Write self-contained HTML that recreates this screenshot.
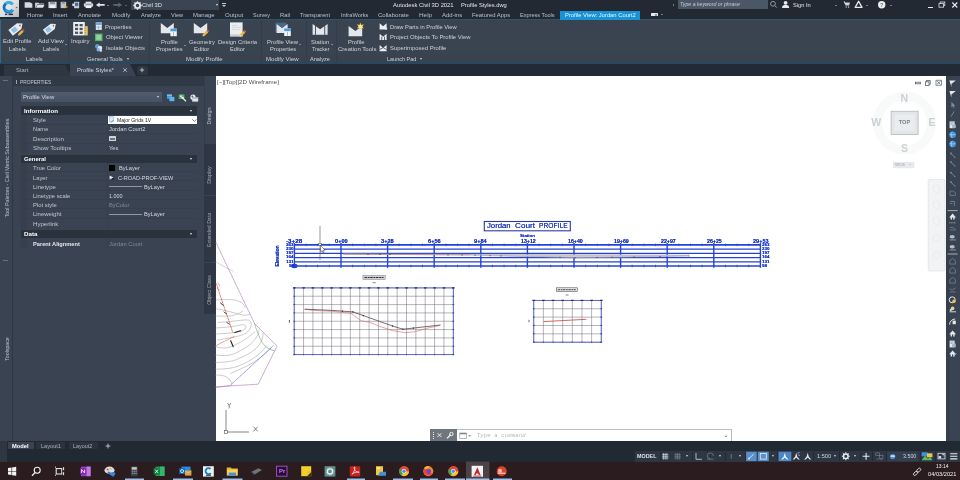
<!DOCTYPE html>
<html><head><meta charset="utf-8">
<style>
*{margin:0;padding:0;box-sizing:border-box}
html,body{width:960px;height:480px;overflow:hidden;background:#3b4453;font-family:"Liberation Sans",sans-serif;}
.a{position:absolute}
.t{position:absolute;white-space:nowrap;color:#c3cad2;font-size:6px;line-height:8px}
svg{overflow:visible}
#w{position:absolute;left:0;top:0;width:960px;height:480px;filter:blur(0.55px)}
</style></head><body><div id="w">
<div class="a" style="left:0px;top:0px;width:960px;height:19px;background:#222933;"></div>
<div class="a" style="left:0px;top:19px;width:960px;height:44px;background:#3a4451;"></div>
<div class="a" style="left:0px;top:19px;width:960px;height:1px;background:#2f5368;"></div>
<div class="a" style="left:0px;top:54px;width:960px;height:8px;background:#394350;"></div>
<div class="a" style="left:0px;top:62px;width:960px;height:1.6px;background:#28485f;"></div>
<div class="a" style="left:0px;top:64px;width:960px;height:12px;background:#222a35;"></div>
<div class="a" style="left:0px;top:76px;width:216px;height:365px;background:#3b4453;"></div>
<div class="a" style="left:216px;top:76px;width:729.5px;height:365px;background:#ffffff;"></div>
<div class="a" style="left:945.5px;top:76px;width:14.5px;height:365px;background:#3a4351;"></div>
<div class="a" style="left:945.5px;top:76px;width:4px;height:365px;background:#363f4c;"></div>
<div class="a" style="left:0px;top:441px;width:960px;height:22px;background:#222a35;"></div>
<div class="a" style="left:0px;top:462px;width:960px;height:18px;background:#2a1d20;"></div>
<div class="a" style="left:0;top:0;width:18.8px;height:17px;background:linear-gradient(135deg,#efeee6 0%,#dcdfe2 50%,#b4b9be 100%)"></div>
<svg class="a" style="left:0px;top:0px" width="19" height="17" viewBox="0 0 19 17"><path d="M13.6 3.4A6.200 6.200 0 1 0 14 10.800L11.400 9.200A3.200 3.200 0 1 1 11.200 5.200Z" fill="#1a6cb8"/><path d="M13.600 3.400A6.200 6.200 0 0 0 4.400 2.600L6.600 5A3.200 3.200 0 0 1 11.200 5.200Z" fill="#3db0e8"/><path d="M4.600 10.600A6.200 6.200 0 0 0 14 10.800L11.400 9.200A3.200 3.200 0 0 1 6.600 9Z" fill="#2a9ad8"/><circle cx="8.800" cy="6.600" r="2.600" fill="#d8eef6" opacity=".7"/><rect x="5" y="13.600" width="2.200" height="1.500" fill="#2a3a8a"/><rect x="8.600" y="13.600" width="4.400" height="1.500" fill="#2a2f38"/><path d="M15.600 7 l2 0 l-1 1.300z" fill="#555"/></svg>
<svg class="a" style="left:22.5px;top:1px" width="11" height="7.6" viewBox="0 0 10 9" preserveAspectRatio="none"><path d="M1.5 1.5h5l2 1.8v4.7h-7z" fill="#d5dae0"/></svg>
<svg class="a" style="left:34.2px;top:1px" width="11" height="7.6" viewBox="0 0 10 9" preserveAspectRatio="none"><path d="M1 2h3l.8.9H9v1H3L1.6 8H1z" fill="#cfd5db"/><path d="M3.2 4.4H9.6L8.2 8H1.8z" fill="#dfe3e7"/></svg>
<svg class="a" style="left:46.5px;top:1px" width="11" height="7.6" viewBox="0 0 10 9" preserveAspectRatio="none"><rect x="1.3" y="1" width="7.4" height="7.4" fill="#cfd4da"/><rect x="2.8" y="1" width="4.4" height="2.6" fill="#8d96a1"/><rect x="2.6" y="5" width="4.8" height="3.4" fill="#eef0f2"/></svg>
<svg class="a" style="left:58.5px;top:1px" width="11" height="7.6" viewBox="0 0 10 9" preserveAspectRatio="none"><rect x="1.5" y="1" width="5" height="7.4" fill="#bfc5cc"/><rect x="2.6" y="1" width="2.8" height="2.4" fill="#8d96a1"/><path d="M5 5.5l3.6 1.6L5 8.6z" fill="#e8b730"/></svg>
<svg class="a" style="left:71.1px;top:1px" width="11" height="7.6" viewBox="0 0 10 9" preserveAspectRatio="none"><rect x="2.8" y="0.8" width="4.6" height="7.8" rx=".6" fill="#c9cfd6"/><rect x="3.6" y="2" width="3" height="4" fill="#4a6d9a"/><rect x="1.2" y="3" width="2" height="3" fill="#dfe3e7"/></svg>
<svg class="a" style="left:82.5px;top:1px" width="11" height="7.6" viewBox="0 0 10 9" preserveAspectRatio="none"><rect x="2.4" y="0.8" width="5.2" height="2.4" fill="#e4e7ea"/><rect x="0.8" y="2.8" width="8.4" height="4" rx=".8" fill="#cdd2d8"/><rect x="2.4" y="5.4" width="5.2" height="3" fill="#f2f3f4"/><rect x="2.4" y="4" width="5.2" height=".9" fill="#7a8591"/></svg>
<svg class="a" style="left:94.5px;top:1px" width="11" height="7.6" viewBox="0 0 10 9" preserveAspectRatio="none"><path d="M0.8 4.6L4.2 1.8v1.7h4.6v2.2H4.2v1.7z" fill="#e4e7ea"/></svg>
<div class="a" style="left:107px;top:5px;width:0;height:0;border-left:1.5px solid transparent;border-right:1.5px solid transparent;border-top:1.8px solid #c3cad2"></div>
<svg class="a" style="left:111.5px;top:1px" width="11" height="7.6" viewBox="0 0 10 9" preserveAspectRatio="none"><path d="M9.2 4.6L5.8 1.8v1.7H1.2v2.2h4.6v1.7z" fill="#5d6774"/></svg>
<div class="a" style="left:125px;top:5px;width:0;height:0;border-left:1.5px solid transparent;border-right:1.5px solid transparent;border-top:1.8px solid #8c96a2"></div>
<div class="a" style="left:131px;top:0px;width:88px;height:10px;background:#3a4452;"></div>
<svg class="a" style="left:133px;top:0.5px" width="9" height="9" viewBox="0 0 9 9"><circle cx="4.5" cy="4.5" r="2.6" fill="none" stroke="#e8ebee" stroke-width="1.7"/><g stroke="#e8ebee" stroke-width="1.3"><path d="M4.5 0.3v1.6M4.5 7.1v1.6M0.3 4.5h1.6M7.1 4.5h1.6M1.5 1.5l1.1 1.1M6.4 6.4l1.1 1.1M1.5 7.5l1.1-1.1M6.4 2.6l1.1-1.1"/></g></svg>
<div class="t" style="left:141.70px;top:1.00px;font-size:5.70px;line-height:8px;color:#dfe3e8;transform-origin:0 50%;transform:scaleX(1.019);letter-spacing:0.000px;">Civil 3D</div>
<div class="a" style="left:215.5px;top:4px;width:0;height:0;border-left:1.8px solid transparent;border-right:1.8px solid transparent;border-top:2.2px solid #dfe3e8"></div>
<div class="a" style="left:222px;top:3px;width:4px;height:1px;background:#c3cad2"></div>
<div class="a" style="left:222px;top:5px;width:0;height:0;border-left:2px solid transparent;border-right:2px solid transparent;border-top:2.2px solid #c3cad2"></div>
<div class="t" style="left:393.00px;top:1.00px;font-size:5.70px;line-height:8px;color:#e3e6ea;transform-origin:0 50%;transform:scaleX(1.025);letter-spacing:0.000px;">Autodesk Civil 3D 2021</div>
<div class="t" style="left:460.80px;top:1.00px;font-size:5.70px;line-height:8px;color:#e3e6ea;transform-origin:0 50%;transform:scaleX(1.013);letter-spacing:0.000px;">Profile Styles.dwg</div>
<div class="a" style="left:673px;top:4px;width:0;height:0;border-top:1.3px solid transparent;border-bottom:1.3px solid transparent;border-left:1.8px solid #c3cad2"></div>
<div class="a" style="left:678px;top:0px;width:90px;height:9px;background:#4b5666;"></div>
<div class="t" style="left:680.30px;top:1.00px;font-size:5.32px;line-height:7.6px;color:#c6ccd3;transform-origin:0 50%;transform:scaleX(0.980);letter-spacing:0.000px;font-style:italic;">Type a keyword or phrase</div>
<svg class="a" style="left:769px;top:0px" width="10" height="9" viewBox="0 0 10 9"><circle cx="4" cy="3.8" r="2.4" fill="none" stroke="#9aa3ad" stroke-width=".9"/><path d="M5.8 5.6l2 2" stroke="#9aa3ad" stroke-width="1"/></svg>
<svg class="a" style="left:781px;top:0px" width="10" height="9" viewBox="0 0 10 9"><circle cx="4.6" cy="2.8" r="1.9" fill="#e8ebee"/><path d="M1 8c0-2.4 1.4-3.2 3.6-3.2S8.2 5.600 8.200 8z" fill="#e8ebee"/></svg>
<div class="t" style="left:793.00px;top:1.00px;font-size:5.70px;line-height:8px;color:#dfe3e8;transform-origin:0 50%;transform:scaleX(1.003);letter-spacing:0.000px;">Sign In</div>
<div class="a" style="left:835px;top:4.5px;width:0;height:0;border-left:1.3px solid transparent;border-right:1.3px solid transparent;border-top:1.6px solid #c3cad2"></div>
<svg class="a" style="left:842px;top:0px" width="10" height="9" viewBox="0 0 10 9"><path d="M1.5 1.6h1.3l.5 1h4.6l-.8 3H3.600z" fill="#cfd5db"/><circle cx="4.200" cy="7" r=".7" fill="#cfd5db"/><circle cx="6.600" cy="7" r=".7" fill="#cfd5db"/></svg>
<svg class="a" style="left:854px;top:0px" width="10" height="9" viewBox="0 0 10 9"><path d="M4.600 1.200L8 7.400H1.200z" fill="none" stroke="#e8ebee" stroke-width="1.300" stroke-linejoin="round"/></svg>
<div class="a" style="left:865.5px;top:4.5px;width:0;height:0;border-left:1.3px solid transparent;border-right:1.3px solid transparent;border-top:1.6px solid #c3cad2"></div>
<svg class="a" style="left:877px;top:0px" width="10" height="10" viewBox="0 0 10 10"><circle cx="4.700" cy="4.800" r="3.700" fill="#eceef0"/><text x="4.700" y="6.800" font-size="5.500" text-anchor="middle" fill="#6a7480" font-family="Liberation Sans" font-weight="bold">?</text></svg>
<div class="a" style="left:890px;top:4.5px;width:0;height:0;border-left:1.3px solid transparent;border-right:1.3px solid transparent;border-top:1.6px solid #c3cad2"></div>
<div class="a" style="left:928px;top:6.5px;width:4.5px;height:1.2px;background:#e8ebee;"></div>
<svg class="a" style="left:938px;top:1px" width="9" height="8" viewBox="0 0 9 8"><rect x="2.200" y="1" width="4.600" height="3.600" fill="none" stroke="#dfe3e8" stroke-width=".8"/><rect x="1" y="2.600" width="4.600" height="3.600" fill="#222933" stroke="#dfe3e8" stroke-width=".8"/></svg>
<svg class="a" style="left:951px;top:1px" width="8" height="8" viewBox="0 0 8 8"><path d="M1.300 1.500l5 5M6.300 1.500l-5 5" stroke="#e8ebee" stroke-width="1.100"/></svg>
<div class="t" style="left:26.90px;top:11.30px;font-size:5.70px;line-height:8px;color:#b9c1ca;transform-origin:0 50%;transform:scaleX(1.066);letter-spacing:0.000px;">Home</div>
<div class="t" style="left:53.10px;top:11.30px;font-size:5.70px;line-height:8px;color:#b9c1ca;transform-origin:0 50%;transform:scaleX(1.010);letter-spacing:0.000px;">Insert</div>
<div class="t" style="left:77.50px;top:11.30px;font-size:5.70px;line-height:8px;color:#b9c1ca;transform-origin:0 50%;transform:scaleX(1.012);letter-spacing:0.000px;">Annotate</div>
<div class="t" style="left:112.00px;top:11.30px;font-size:5.70px;line-height:8px;color:#b9c1ca;transform-origin:0 50%;transform:scaleX(1.090);letter-spacing:0.000px;">Modify</div>
<div class="t" style="left:140.80px;top:11.30px;font-size:5.70px;line-height:8px;color:#b9c1ca;transform-origin:0 50%;transform:scaleX(0.986);letter-spacing:0.000px;">Analyze</div>
<div class="t" style="left:170.80px;top:11.30px;font-size:5.70px;line-height:8px;color:#b9c1ca;transform-origin:0 50%;transform:scaleX(0.996);letter-spacing:0.000px;">View</div>
<div class="t" style="left:193.30px;top:11.30px;font-size:5.70px;line-height:8px;color:#b9c1ca;transform-origin:0 50%;transform:scaleX(1.054);letter-spacing:0.000px;">Manage</div>
<div class="t" style="left:224.70px;top:11.30px;font-size:5.70px;line-height:8px;color:#b9c1ca;transform-origin:0 50%;transform:scaleX(1.070);letter-spacing:0.000px;">Output</div>
<div class="t" style="left:253.00px;top:11.30px;font-size:5.70px;line-height:8px;color:#b9c1ca;transform-origin:0 50%;transform:scaleX(0.958);letter-spacing:0.000px;">Survey</div>
<div class="t" style="left:280.00px;top:11.30px;font-size:5.70px;line-height:8px;color:#b9c1ca;transform-origin:0 50%;transform:scaleX(1.018);letter-spacing:0.000px;">Rail</div>
<div class="t" style="left:300.00px;top:11.30px;font-size:5.70px;line-height:8px;color:#b9c1ca;transform-origin:0 50%;transform:scaleX(0.983);letter-spacing:0.000px;">Transparent</div>
<div class="t" style="left:340.80px;top:11.30px;font-size:5.70px;line-height:8px;color:#b9c1ca;transform-origin:0 50%;transform:scaleX(1.002);letter-spacing:0.000px;">InfraWorks</div>
<div class="t" style="left:378.00px;top:11.30px;font-size:5.70px;line-height:8px;color:#b9c1ca;transform-origin:0 50%;transform:scaleX(1.057);letter-spacing:0.000px;">Collaborate</div>
<div class="t" style="left:418.50px;top:11.30px;font-size:5.70px;line-height:8px;color:#b9c1ca;transform-origin:0 50%;transform:scaleX(1.126);letter-spacing:0.000px;">Help</div>
<div class="t" style="left:441.70px;top:11.30px;font-size:5.70px;line-height:8px;color:#b9c1ca;transform-origin:0 50%;transform:scaleX(1.050);letter-spacing:0.000px;">Add-ins</div>
<div class="t" style="left:471.70px;top:11.30px;font-size:5.70px;line-height:8px;color:#b9c1ca;transform-origin:0 50%;transform:scaleX(1.033);letter-spacing:0.000px;">Featured Apps</div>
<div class="t" style="left:520.00px;top:11.30px;font-size:5.70px;line-height:8px;color:#b9c1ca;transform-origin:0 50%;transform:scaleX(0.981);letter-spacing:0.000px;">Express Tools</div>
<div class="a" style="left:560px;top:11px;width:80px;height:9px;background:#1792d4;"></div>
<div class="t" style="left:565.00px;top:11.30px;font-size:5.70px;line-height:8px;color:#eaf4fb;transform-origin:0 50%;transform:scaleX(1.022);letter-spacing:0.000px;">Profile View: Jordan Court2</div>
<div class="a" style="left:651px;top:13.3px;width:7px;height:3.2px;background:#e8ebee;border-radius:.6px"></div>
<div class="a" style="left:655px;top:13.8px;width:2.4px;height:2.2px;background:#8d96a1;"></div>
<div class="a" style="left:661px;top:14.3px;width:0;height:0;border-left:1.4px solid transparent;border-right:1.4px solid transparent;border-top:1.7px solid #c3cad2"></div>
<div class="a" style="left:0px;top:20px;width:1px;height:43px;background:#34678a;"></div>
<div class="a" style="left:67.5px;top:21px;width:1px;height:41px;background:#333c49;"></div>
<div class="a" style="left:149.4px;top:21px;width:1px;height:41px;background:#333c49;"></div>
<div class="a" style="left:261.2px;top:21px;width:1px;height:41px;background:#333c49;"></div>
<div class="a" style="left:305.6px;top:21px;width:1px;height:41px;background:#333c49;"></div>
<div class="a" style="left:335.6px;top:21px;width:1px;height:41px;background:#333c49;"></div>
<svg class="a" style="left:0px;top:19px" width="68" height="44" viewBox="0 0 68 44"><g transform="translate(16.5,9.2) rotate(-38) scale(1.0)"><path d="M-7.5 -3.6H3.4L7.6 0L3.4 3.6H-7.5Z" fill="#e9ecef"/><rect x="-5.4" y="-2.3" width="5.4" height="4.6" fill="#8fc0ea"/><circle cx="4.4" cy="0" r=".9" fill="#6b7682"/></g><g transform="translate(18.2,16.4) rotate(-45) scale(0.95)"><path d="M0 0l1.6-1.2v2.400z" fill="#f3e6c8"/><rect x="1.6" y="-1.2" width="5.2" height="2.4" fill="#e9b93a"/><rect x="6.8" y="-1.2" width="1.6" height="2.4" fill="#d2553f"/></g></svg>
<div class="t" style="left:2.75px;top:37.30px;font-size:5.70px;line-height:8px;color:#cdd3da;transform-origin:0 50%;transform:scaleX(1.034);letter-spacing:0.000px;">Edit Profile</div>
<div class="t" style="left:8.75px;top:44.70px;font-size:5.70px;line-height:8px;color:#cdd3da;transform-origin:0 50%;transform:scaleX(1.003);letter-spacing:0.000px;">Labels</div>
<svg class="a" style="left:0px;top:19px" width="68" height="44" viewBox="0 0 68 44"><g transform="translate(50.3,9.2) rotate(-38) scale(0.92)"><path d="M-7.5 -3.6H3.4L7.6 0L3.4 3.6H-7.5Z" fill="#e9ecef"/><rect x="-5.4" y="-2.3" width="5.4" height="4.6" fill="#8fc0ea"/><circle cx="4.4" cy="0" r=".9" fill="#6b7682"/></g></svg>
<div class="t" style="left:38.10px;top:37.30px;font-size:5.70px;line-height:8px;color:#cdd3da;transform-origin:0 50%;transform:scaleX(1.070);letter-spacing:0.000px;">Add View</div>
<div class="t" style="left:42.50px;top:44.70px;font-size:5.70px;line-height:8px;color:#cdd3da;transform-origin:0 50%;transform:scaleX(0.968);letter-spacing:0.000px;">Labels</div>
<div class="a" style="left:65px;top:43.6px;width:0;height:0;border-left:1.3px solid transparent;border-right:1.3px solid transparent;border-top:1.6px solid #c3cad2"></div>
<div class="t" style="left:25.80px;top:55.00px;font-size:5.70px;line-height:8px;color:#cdd3da;transform-origin:0 50%;transform:scaleX(0.994);letter-spacing:0.000px;">Labels</div>
<svg class="a" style="left:0px;top:19px" width="150" height="44" viewBox="0 0 150 44"><rect x="73.2" y="3" width="11.6" height="13.4" fill="#eef0f2"/><rect x="75.0" y="5.0" width="3.1" height="2.3" fill="#4a5260"/><rect x="79.6" y="5.0" width="3.1" height="2.3" fill="#4a5260"/><rect x="75.0" y="8.8" width="3.1" height="2.3" fill="#4a5260"/><rect x="79.6" y="8.8" width="3.1" height="2.3" fill="#4a5260"/><rect x="75.0" y="12.6" width="3.1" height="2.3" fill="#4a5260"/><rect x="79.6" y="12.6" width="3.1" height="2.3" fill="#4a5260"/><rect x="84.6" y="7.2" width="3.2" height="9.2" fill="#e2c467"/><path d="M84.600 9.5h1.600M84.600 11.500h1.600M84.600 13.500h1.600" stroke="#9c8334" stroke-width=".5"/></svg>
<div class="t" style="left:71.30px;top:37.10px;font-size:5.70px;line-height:8px;color:#cdd3da;transform-origin:0 50%;transform:scaleX(1.081);letter-spacing:0.000px;">Inquiry</div>
<svg class="a" style="left:0px;top:19px" width="150" height="44" viewBox="0 0 150 44"><rect x="95.8" y="3.400" width="6" height="7.500" fill="#e6eaee"/><rect x="95.8" y="3.400" width="6" height="2.600" fill="#6fa8dc"/><path d="M98.600 6.400v4.500M95.800 8.200h6" stroke="#7d8fa3" stroke-width=".5"/><rect x="95" y="14.600" width="7.500" height="7.500" fill="#58b36c"/><rect x="96.200" y="15.800" width="5.100" height="5.100" fill="#92d29f"/><circle cx="97.300" cy="27.400" r="2.300" fill="#5b9bd8"/><circle cx="100" cy="29" r="2.300" fill="#dfe6ee"/><circle cx="98.200" cy="30.800" r="1.700" fill="#7fb3e4"/><circle cx="100.800" cy="31.600" r="1.300" fill="#cfdbe8"/></svg>
<div class="t" style="left:105.30px;top:22.50px;font-size:5.70px;line-height:8px;color:#cdd3da;transform-origin:0 50%;transform:scaleX(1.024);letter-spacing:0.000px;">Properties</div>
<div class="t" style="left:105.60px;top:33.40px;font-size:5.70px;line-height:8px;color:#cdd3da;transform-origin:0 50%;transform:scaleX(1.043);letter-spacing:0.000px;">Object Viewer</div>
<div class="t" style="left:106.00px;top:44.30px;font-size:5.70px;line-height:8px;color:#cdd3da;transform-origin:0 50%;transform:scaleX(1.035);letter-spacing:0.000px;">Isolate Objects</div>
<div class="t" style="left:87.25px;top:55.00px;font-size:5.70px;line-height:8px;color:#cdd3da;transform-origin:0 50%;transform:scaleX(1.022);letter-spacing:0.000px;">General Tools</div>
<div class="a" style="left:126.8px;top:58px;width:0;height:0;border-left:1.9px solid transparent;border-right:1.900px solid transparent;border-top:2.200px solid #cdd3da"></div>
<svg class="a" style="left:0px;top:19px" width="480" height="44" viewBox="0 0 480 44"><path d="M160.8 4L167.3 8.896L173.8 4V14.2H160.8Z" fill="#e3e6ea"/><rect x="170.4" y="9.6" width="6.4" height="7.6" fill="#f2f4f6"/><rect x="170.4" y="9.6" width="6.4" height="2.7359999999999998" fill="#4c9bdc"/><rect x="173.28" y="13.02" width="0.7" height="3.8" fill="#8aa0b6"/></svg>
<div class="t" style="left:161.00px;top:37.75px;font-size:5.70px;line-height:8px;color:#cdd3da;transform-origin:0 50%;transform:scaleX(1.037);letter-spacing:0.000px;">Profile</div>
<div class="t" style="left:156.00px;top:44.60px;font-size:5.70px;line-height:8px;color:#cdd3da;transform-origin:0 50%;transform:scaleX(1.030);letter-spacing:0.000px;">Properties</div>
<div class="a" style="left:183.8px;top:44.6px;width:0;height:0;border-left:1.3px solid transparent;border-right:1.3px solid transparent;border-top:1.6px solid #c3cad2"></div>
<svg class="a" style="left:0px;top:19px" width="480" height="44" viewBox="0 0 480 44"><path d="M193.8 4L200.5 8.896L207.20000000000002 4V14.2H193.8Z" fill="#e3e6ea"/><g transform="translate(202.6,17.2) rotate(-45) scale(1.0)"><path d="M0 0l1.6-1.2v2.400z" fill="#f3e6c8"/><rect x="1.6" y="-1.2" width="5.2" height="2.4" fill="#e9b93a"/><rect x="6.8" y="-1.2" width="1.6" height="2.4" fill="#d2553f"/></g></svg>
<div class="t" style="left:188.75px;top:37.75px;font-size:5.70px;line-height:8px;color:#cdd3da;transform-origin:0 50%;transform:scaleX(1.039);letter-spacing:0.000px;">Geometry</div>
<div class="t" style="left:194.40px;top:44.60px;font-size:5.70px;line-height:8px;color:#cdd3da;transform-origin:0 50%;transform:scaleX(1.031);letter-spacing:0.000px;">Editor</div>
<svg class="a" style="left:0px;top:19px" width="480" height="44" viewBox="0 0 480 44"><rect x="230" y="3.400" width="12.600" height="14" fill="#ebedef"/><rect x="230" y="15.400" width="12.600" height="2" fill="#c9cdd2"/><path d="M232 6.400h6M232 8.400h8.600M232 10.400h8.600" stroke="#c2c7cd" stroke-width=".6"/><g transform="translate(239.6,17.6) rotate(-45) scale(1.0)"><path d="M0 0l1.6-1.2v2.400z" fill="#f3e6c8"/><rect x="1.6" y="-1.2" width="5.2" height="2.4" fill="#e9b93a"/><rect x="6.8" y="-1.2" width="1.6" height="2.4" fill="#d2553f"/></g></svg>
<div class="t" style="left:218.10px;top:37.75px;font-size:5.70px;line-height:8px;color:#cdd3da;transform-origin:0 50%;transform:scaleX(1.039);letter-spacing:0.000px;">Design Criteria</div>
<div class="t" style="left:230.00px;top:44.60px;font-size:5.70px;line-height:8px;color:#cdd3da;transform-origin:0 50%;transform:scaleX(1.007);letter-spacing:0.000px;">Editor</div>
<div class="t" style="left:186.00px;top:55.00px;font-size:5.70px;line-height:8px;color:#cdd3da;transform-origin:0 50%;transform:scaleX(1.064);letter-spacing:0.000px;">Modify Profile</div>
<svg class="a" style="left:0px;top:19px" width="480" height="44" viewBox="0 0 480 44"><rect x="275.400" y="3.600" width="11" height="10" fill="#4d86b8" opacity=".55"/><path d="M276.6 5L282.1 9.32L287.6 5V14H276.6Z" fill="#e3e6ea"/><rect x="284.2" y="9.4" width="6.6" height="7.6" fill="#f2f4f6"/><rect x="284.2" y="9.4" width="6.6" height="2.7359999999999998" fill="#4c9bdc"/><rect x="287.17" y="12.82" width="0.7" height="3.8" fill="#8aa0b6"/></svg>
<div class="t" style="left:266.90px;top:37.75px;font-size:5.70px;line-height:8px;color:#cdd3da;transform-origin:0 50%;transform:scaleX(1.040);letter-spacing:0.000px;">Profile View</div>
<div class="t" style="left:269.75px;top:44.60px;font-size:5.70px;line-height:8px;color:#cdd3da;transform-origin:0 50%;transform:scaleX(1.011);letter-spacing:0.000px;">Properties</div>
<div class="a" style="left:299.4px;top:44.4px;width:0;height:0;border-left:1.3px solid transparent;border-right:1.3px solid transparent;border-top:1.6px solid #c3cad2"></div>
<div class="t" style="left:266.25px;top:55.00px;font-size:5.70px;line-height:8px;color:#cdd3da;transform-origin:0 50%;transform:scaleX(1.069);letter-spacing:0.000px;">Modify View</div>
<svg class="a" style="left:0px;top:19px" width="480" height="44" viewBox="0 0 480 44"><path d="M312.6 5L320.1 10.184000000000001L327.6 5V15.8H312.6Z" fill="#e3e6ea"/><rect x="315" y="5" width=".9" height="10.800" fill="#3a4451"/><rect x="324.300" y="5" width=".9" height="10.800" fill="#3a4451"/></svg>
<div class="t" style="left:311.00px;top:37.75px;font-size:5.70px;line-height:8px;color:#cdd3da;transform-origin:0 50%;transform:scaleX(1.037);letter-spacing:0.000px;">Station</div>
<div class="t" style="left:311.50px;top:44.60px;font-size:5.70px;line-height:8px;color:#cdd3da;transform-origin:0 50%;transform:scaleX(0.916);letter-spacing:0.000px;">Tracker</div>
<div class="a" style="left:331px;top:43.8px;width:0;height:0;border-left:1.3px solid transparent;border-right:1.3px solid transparent;border-top:1.6px solid #c3cad2"></div>
<div class="t" style="left:310.00px;top:55.00px;font-size:5.70px;line-height:8px;color:#cdd3da;transform-origin:0 50%;transform:scaleX(0.986);letter-spacing:0.000px;">Analyze</div>
<svg class="a" style="left:0px;top:19px" width="480" height="44" viewBox="0 0 480 44"><path d="M348.6 7L355.40000000000003 11.896L362.20000000000005 7V17.2H348.6Z" fill="#e3e6ea"/><g transform="translate(360.400,7.400)"><path d="M0-3.700L1 -1.300L3.500-2.200L2 0L3.500 2.200L1 1.300L0 3.700L-1 1.300L-3.500 2.200L-2 0L-3.500-2.200L-1-1.300Z" fill="#f3d24b"/><circle r="1.500" fill="#fbeaa0"/></g></svg>
<div class="t" style="left:348.10px;top:37.75px;font-size:5.70px;line-height:8px;color:#cdd3da;transform-origin:0 50%;transform:scaleX(1.031);letter-spacing:0.000px;">Profile</div>
<div class="t" style="left:337.50px;top:44.60px;font-size:5.70px;line-height:8px;color:#cdd3da;transform-origin:0 50%;transform:scaleX(1.060);letter-spacing:0.000px;">Creation Tools</div>
<svg class="a" style="left:0px;top:19px" width="480" height="44" viewBox="0 0 480 44"><path d="M379.6 4.2L383.1 7.176L386.6 4.2V10.4H379.6Z" fill="#eceef1"/><path d="M379.6 14.8L383.1 17.776L386.6 14.8V21.0H379.6Z" fill="#eceef1"/><path d="M379.6 26L383.1 28.976L386.6 26V32.2H379.6Z" fill="#eceef1"/><circle cx="386" cy="9.600" r="1.200" fill="#eceef1"/><rect x="381.400" y="17.600" width=".8" height="3.400" fill="#3a4451"/><rect x="384.200" y="17.600" width=".8" height="3.400" fill="#3a4451"/><path d="M379.600 30.600l3.500-2 3.500 2" stroke="#3b4553" stroke-width=".8" fill="none"/></svg>
<div class="t" style="left:390.00px;top:22.50px;font-size:5.70px;line-height:8px;color:#cdd3da;transform-origin:0 50%;transform:scaleX(1.017);letter-spacing:0.000px;">Draw Parts in Profile View</div>
<div class="t" style="left:390.00px;top:33.40px;font-size:5.70px;line-height:8px;color:#cdd3da;transform-origin:0 50%;transform:scaleX(1.037);letter-spacing:0.000px;">Project Objects To Profile View</div>
<div class="t" style="left:390.00px;top:44.30px;font-size:5.70px;line-height:8px;color:#cdd3da;transform-origin:0 50%;transform:scaleX(1.037);letter-spacing:0.000px;">Superimposed Profile</div>
<div class="t" style="left:386.90px;top:55.00px;font-size:5.70px;line-height:8px;color:#cdd3da;transform-origin:0 50%;transform:scaleX(0.965);letter-spacing:0.000px;">Launch Pad</div>
<div class="a" style="left:420px;top:58px;width:0;height:0;border-left:1.9px solid transparent;border-right:1.900px solid transparent;border-top:2.200px solid #cdd3da"></div>
<div class="a" style="left:4px;top:64.6px;width:67px;height:11.4px;background:#2e3642;clip-path:polygon(0 0,61px 0,67px 11.4px,0 11.4px)"></div>
<div class="a" style="left:137px;top:65.6px;width:10.5px;height:9px;background:#2e3642;border-radius:2px"></div>
<div class="t" style="left:16.00px;top:66.00px;font-size:5.70px;line-height:8px;color:#aeb6c0;transform-origin:0 50%;transform:scaleX(1.022);letter-spacing:0.000px;">Start</div>
<div class="a" style="left:70px;top:64px;width:66px;height:12px;background:#3a4351;clip-path:polygon(0 0,60px 0,66px 12px,0 12px)"></div>
<div class="t" style="left:77.00px;top:66.00px;font-size:5.70px;line-height:8px;color:#d5dae0;transform-origin:0 50%;transform:scaleX(1.043);letter-spacing:0.000px;">Profile Styles*</div>
<svg class="a" style="left:121px;top:66px" width="8" height="8" viewBox="0 0 8 8"><path d="M2.200 2.200l3.600 3.600M5.800 2.200l-3.600 3.600" stroke="#c3cad2" stroke-width=".8"/></svg>
<svg class="a" style="left:138px;top:66px" width="8" height="8" viewBox="0 0 8 8"><path d="M4 1.800v4.400M1.800 4h4.400" stroke="#c3cad2" stroke-width=".9"/></svg>
<div class="a" style="left:0px;top:76px;width:12px;height:365px;background:#3a4352;"></div>
<div class="a" style="left:12px;top:76px;width:1px;height:365px;background:#2f3743;"></div>
<div class="a" style="left:3px;top:79.5px;width:5px;height:1px;background:#687280;"></div>
<div class="t" style="left:-143.2px;top:164px;width:300px;height:8px;line-height:8px;text-align:center;font-size:6px;color:#b9c1ca;transform:rotate(-90deg) scaleX(0.886);transform-origin:50% 50%">Tool Palettes - Civil Metric Subassemblies</div>
<div class="a" style="left:3px;top:260px;width:5px;height:1px;background:#687280;"></div>
<div class="t" style="left:-143.2px;top:345px;width:300px;height:8px;line-height:8px;text-align:center;font-size:6px;color:#b9c1ca;transform:rotate(-90deg) scaleX(0.870);transform-origin:50% 50%">Toolspace</div>
<div class="a" style="left:13px;top:76px;width:191px;height:365px;background:#3a4351;"></div>
<div class="a" style="left:13px;top:76px;width:191px;height:10px;background:#303946;"></div>
<div class="a" style="left:15.6px;top:79.5px;width:1px;height:4.5px;background:#9aa3ae;"></div>
<div class="t" style="left:20.00px;top:77.60px;font-size:5.70px;line-height:8px;color:#c6cdd5;transform-origin:0 50%;transform:scaleX(0.853);letter-spacing:0.000px;">PROPERTIES</div>
<div class="a" style="left:21.2px;top:92.2px;width:141px;height:10px;background:linear-gradient(#505c6e,#465162)"></div>
<div class="t" style="left:22.50px;top:93.30px;font-size:5.70px;line-height:8px;color:#d5dbe2;transform-origin:0 50%;transform:scaleX(1.042);letter-spacing:0.000px;">Profile View</div>
<div class="a" style="left:157px;top:96.4px;width:0;height:0;border-left:1.8px solid transparent;border-right:1.8px solid transparent;border-top:2.2px solid #d5dbe2"></div>
<svg class="a" style="left:166px;top:93px" width="34" height="10" viewBox="0 0 34 10"><rect x="1" y="1.600" width="5" height="4.200" fill="#3d9be0"/><rect x="3.400" y="3.800" width="5" height="4.400" fill="#61b3ee"/><rect x="1" y="1.600" width="5" height="1.200" fill="#8ccaf4"/><rect x="12.800" y="1.400" width="5.600" height="4.600" fill="#4fae66"/><rect x="13.800" y="2.400" width="2.400" height="1.800" fill="#bfe5c8"/><path d="M16 4.400l4 3.800" stroke="#eef1f3" stroke-width="1.300"/><path d="M15.400 3.800l2.800.4-2.200 2.200z" fill="#eef1f3"/><circle cx="27" cy="4.200" r="2.600" fill="#eef1f3"/><rect x="26.200" y="4.400" width="6" height="4.200" fill="#e1e5e9"/><rect x="26.200" y="4.400" width="6" height="1.200" fill="#9aa6b3"/><circle cx="26.400" cy="3.600" r="1" fill="#5b6673"/></svg>
<div class="a" style="left:21.2px;top:115px;width:6px;height:37.5px;background:#373f4c;"></div>
<div class="a" style="left:106.6px;top:115px;width:0.8px;height:37.5px;background:#363f4b;"></div>
<div class="a" style="left:27.2px;top:123.94999999999999px;width:170.3px;height:0.8px;background:#373f4c;"></div>
<div class="a" style="left:27.2px;top:133.29999999999998px;width:170.3px;height:0.8px;background:#373f4c;"></div>
<div class="a" style="left:27.2px;top:142.64999999999998px;width:170.3px;height:0.8px;background:#373f4c;"></div>
<div class="a" style="left:21.2px;top:162px;width:6px;height:66.5px;background:#373f4c;"></div>
<div class="a" style="left:106.6px;top:162px;width:0.8px;height:66.5px;background:#363f4b;"></div>
<div class="a" style="left:27.2px;top:170.95px;width:170.3px;height:0.8px;background:#373f4c;"></div>
<div class="a" style="left:27.2px;top:180.29999999999998px;width:170.3px;height:0.8px;background:#373f4c;"></div>
<div class="a" style="left:27.2px;top:189.64999999999998px;width:170.3px;height:0.8px;background:#373f4c;"></div>
<div class="a" style="left:27.2px;top:198.99999999999997px;width:170.3px;height:0.8px;background:#373f4c;"></div>
<div class="a" style="left:27.2px;top:208.34999999999997px;width:170.3px;height:0.8px;background:#373f4c;"></div>
<div class="a" style="left:27.2px;top:217.69999999999996px;width:170.3px;height:0.8px;background:#373f4c;"></div>
<div class="a" style="left:21.2px;top:238px;width:6px;height:10px;background:#373f4c;"></div>
<div class="a" style="left:106.6px;top:238px;width:0.8px;height:10px;background:#363f4b;"></div>
<div class="a" style="left:21.2px;top:106.4px;width:176.3px;height:8.4px;background:#2a323d;"></div>
<div class="t" style="left:24.00px;top:106.70px;font-size:5.70px;line-height:8px;color:#ffffff;transform-origin:0 50%;transform:scaleX(1.088);letter-spacing:0.000px;font-weight:bold;">Information</div>
<div class="a" style="left:190px;top:109.7px;width:0;height:0;border-left:1.9px solid transparent;border-right:1.9px solid transparent;border-top:2.3px solid #e3e7eb"></div>
<div class="t" style="left:33.10px;top:116.20px;font-size:5.70px;line-height:8px;color:#c0c7cf;transform-origin:0 50%;transform:scaleX(1.018);letter-spacing:0.000px;">Style</div>
<div class="a" style="left:108.1px;top:115.9px;width:89.2px;height:8.4px;background:#ffffff;"></div>
<svg class="a" style="left:108.5px;top:116.4px" width="6" height="7.4" viewBox="0 0 6 7.4"><rect x=".6" y=".4" width="3.800" height="5.200" fill="#dfe8f2" stroke="#7fa6cf" stroke-width=".5"/><path d="M2 6.600l2.600-2.600" stroke="#4c86c2" stroke-width=".9"/></svg>
<div class="t" style="left:116.90px;top:116.80px;font-size:5.51px;line-height:7.8px;color:#20252c;transform-origin:0 50%;transform:scaleX(0.935);letter-spacing:0.000px;">Major Grids 1V</div>
<svg class="a" style="left:190.5px;top:117.5px" width="7" height="5" viewBox="0 0 7 5"><path d="M1.300 1.300l2.100 2.100 2.100-2.100" fill="none" stroke="#555e69" stroke-width=".8"/></svg>
<div class="t" style="left:33.10px;top:125.30px;font-size:5.70px;line-height:8px;color:#c0c7cf;transform-origin:0 50%;transform:scaleX(1.013);letter-spacing:0.000px;">Name</div>
<div class="t" style="left:109.00px;top:125.30px;font-size:5.70px;line-height:8px;color:#d4dae0;transform-origin:0 50%;transform:scaleX(1.013);letter-spacing:0.000px;">Jordan Court2</div>
<div class="t" style="left:33.10px;top:134.60px;font-size:5.70px;line-height:8px;color:#c0c7cf;transform-origin:0 50%;transform:scaleX(1.084);letter-spacing:0.000px;">Description</div>
<div class="a" style="left:109.2px;top:136.4px;width:6.4px;height:4.6px;background:#cfd4da;border-radius:.6px"></div>
<div class="a" style="left:110.2px;top:137.6px;width:4.4px;height:0.7px;background:#6c7682;"></div>
<div class="a" style="left:110.2px;top:139px;width:4.4px;height:0.7px;background:#6c7682;"></div>
<div class="t" style="left:33.10px;top:144.00px;font-size:5.70px;line-height:8px;color:#c0c7cf;transform-origin:0 50%;transform:scaleX(1.095);letter-spacing:0.000px;">Show Tooltips</div>
<div class="t" style="left:109.00px;top:144.00px;font-size:5.70px;line-height:8px;color:#d4dae0;transform-origin:0 50%;transform:scaleX(1.022);letter-spacing:0.000px;">Yes</div>
<div class="a" style="left:21.2px;top:154.7px;width:176.3px;height:8.4px;background:#2a323d;"></div>
<div class="t" style="left:24.00px;top:155.00px;font-size:5.70px;line-height:8px;color:#ffffff;transform-origin:0 50%;transform:scaleX(1.036);letter-spacing:0.000px;font-weight:bold;">General</div>
<div class="a" style="left:190px;top:158.0px;width:0;height:0;border-left:1.9px solid transparent;border-right:1.9px solid transparent;border-top:2.3px solid #e3e7eb"></div>
<div class="t" style="left:33.10px;top:164.20px;font-size:5.70px;line-height:8px;color:#c0c7cf;transform-origin:0 50%;transform:scaleX(1.044);letter-spacing:0.000px;">True Color</div>
<div class="a" style="left:109.2px;top:165.4px;width:5.8px;height:5.8px;background:#000000;"></div>
<div class="t" style="left:119.00px;top:164.20px;font-size:5.70px;line-height:8px;color:#d4dae0;transform-origin:0 50%;transform:scaleX(0.995);letter-spacing:0.000px;">ByLayer</div>
<div class="t" style="left:33.10px;top:173.60px;font-size:5.70px;line-height:8px;color:#c0c7cf;transform-origin:0 50%;transform:scaleX(1.010);letter-spacing:0.000px;">Layer</div>
<svg class="a" style="left:108.8px;top:175.2px" width="6" height="5" viewBox="0 0 6 5"><path d="M.6.600l3.800 1.900L.600 4.400z" fill="#e8ebee"/><rect x="3" y="3" width="2.200" height="1.600" fill="#20262f"/></svg>
<div class="t" style="left:118.00px;top:173.60px;font-size:5.70px;line-height:8px;color:#d4dae0;transform-origin:0 50%;transform:scaleX(0.976);letter-spacing:0.000px;">C-ROAD-PROF-VIEW</div>
<div class="t" style="left:33.10px;top:182.60px;font-size:5.70px;line-height:8px;color:#c0c7cf;transform-origin:0 50%;transform:scaleX(1.063);letter-spacing:0.000px;">Linetype</div>
<div class="a" style="left:109.2px;top:186.4px;width:32.5px;height:0.6px;background:#8f98a3;"></div>
<div class="t" style="left:143.60px;top:182.60px;font-size:5.70px;line-height:8px;color:#d4dae0;transform-origin:0 50%;transform:scaleX(0.995);letter-spacing:0.000px;">ByLayer</div>
<div class="t" style="left:33.10px;top:192.00px;font-size:5.70px;line-height:8px;color:#c0c7cf;transform-origin:0 50%;transform:scaleX(1.026);letter-spacing:0.000px;">Linetype scale</div>
<div class="t" style="left:109.00px;top:192.00px;font-size:5.70px;line-height:8px;color:#d4dae0;transform-origin:0 50%;transform:scaleX(0.954);letter-spacing:0.000px;">1.000</div>
<div class="t" style="left:33.10px;top:201.20px;font-size:5.70px;line-height:8px;color:#c0c7cf;transform-origin:0 50%;transform:scaleX(1.034);letter-spacing:0.000px;">Plot style</div>
<div class="t" style="left:109.00px;top:201.20px;font-size:5.70px;line-height:8px;color:#808a96;transform-origin:0 50%;transform:scaleX(1.006);letter-spacing:0.000px;">ByColor</div>
<div class="t" style="left:33.10px;top:210.40px;font-size:5.70px;line-height:8px;color:#c0c7cf;transform-origin:0 50%;transform:scaleX(1.042);letter-spacing:0.000px;">Lineweight</div>
<div class="a" style="left:109.2px;top:214.2px;width:32.5px;height:0.6px;background:#8f98a3;"></div>
<div class="t" style="left:143.60px;top:210.40px;font-size:5.70px;line-height:8px;color:#d4dae0;transform-origin:0 50%;transform:scaleX(0.995);letter-spacing:0.000px;">ByLayer</div>
<div class="t" style="left:33.10px;top:219.70px;font-size:5.70px;line-height:8px;color:#c0c7cf;transform-origin:0 50%;transform:scaleX(1.069);letter-spacing:0.000px;">Hyperlink</div>
<div class="a" style="left:21.2px;top:230px;width:176.3px;height:8.4px;background:#2a323d;"></div>
<div class="t" style="left:24.00px;top:230.30px;font-size:5.70px;line-height:8px;color:#ffffff;transform-origin:0 50%;transform:scaleX(1.093);letter-spacing:0.000px;font-weight:bold;">Data</div>
<div class="a" style="left:190px;top:233.3px;width:0;height:0;border-left:1.9px solid transparent;border-right:1.9px solid transparent;border-top:2.3px solid #e3e7eb"></div>
<div class="t" style="left:33.10px;top:239.50px;font-size:5.70px;line-height:8px;color:#e4e7eb;transform-origin:0 50%;transform:scaleX(0.998);letter-spacing:0.000px;font-weight:bold;">Parent Alignment</div>
<div class="t" style="left:109.00px;top:239.50px;font-size:5.70px;line-height:8px;color:#808a96;transform-origin:0 50%;transform:scaleX(1.017);letter-spacing:0.000px;">Jordan Court</div>
<div class="a" style="left:203.8px;top:76px;width:12px;height:365px;background:#3a4351;"></div>
<div class="a" style="left:203.8px;top:143.5px;width:12px;height:170.5px;background:#2f3744;"></div>
<div class="a" style="left:203.8px;top:76px;width:0.8px;height:67.5px;background:#333c48;"></div>
<div class="a" style="left:203.8px;top:195px;width:12px;height:0.8px;background:#3a4351;"></div>
<div class="a" style="left:203.8px;top:262px;width:12px;height:0.8px;background:#3a4351;"></div>
<div class="t" style="left:59.19999999999999px;top:112px;width:300px;height:8px;line-height:8px;text-align:center;font-size:6px;color:#b9c1ca;transform:rotate(-90deg) scaleX(0.900);transform-origin:50% 50%">Design</div>
<div class="t" style="left:59.19999999999999px;top:170.8px;width:300px;height:8px;line-height:8px;text-align:center;font-size:6px;color:#9fa8b3;transform:rotate(-90deg) scaleX(0.890);transform-origin:50% 50%">Display</div>
<div class="t" style="left:59.19999999999999px;top:225.8px;width:300px;height:8px;line-height:8px;text-align:center;font-size:6px;color:#9fa8b3;transform:rotate(-90deg) scaleX(0.857);transform-origin:50% 50%">Extended Data</div>
<div class="t" style="left:59.19999999999999px;top:285.8px;width:300px;height:8px;line-height:8px;text-align:center;font-size:6px;color:#9fa8b3;transform:rotate(-90deg) scaleX(0.867);transform-origin:50% 50%">Object Class</div>
<div class="t" style="left:217.00px;top:78.00px;font-size:5.70px;line-height:8px;color:#4a4f55;transform-origin:0 50%;transform:scaleX(1.084);letter-spacing:0.000px;">[&#8722;][Top][2D Wireframe]</div>
<svg class="a" style="left:0px;top:0px" width="960" height="480" viewBox="0 0 960 480"><g fill="none" stroke-linecap="round" stroke-linejoin="round"><path d="M215.900 242.400L254.500 323.500L277 346.100L258.200 384.200L216 386.800" stroke="#a878b8" stroke-width=".6"/><path d="M216 262L223 266L233 271" stroke="#aaaaaa" stroke-width=".5"/><path d="M216.5 300Q231.5 298.75 237.1 300.6Q242.75 302.5 244.0 305.0L245.25 307.5" stroke="#9a9a9a" stroke-width=".5"/><path d="M216.5 308.75Q234 312.5 239.2 314.2Q244.5 316 247.2 315.0L250 314" stroke="#9a9a9a" stroke-width=".5"/><path d="M217.75 322.5Q234 321.25 240.0 320.4Q246 319.5 248.8 320.2Q251.5 321 251.2 324.5Q251 328 249.0 330.5Q247 333 243.0 334.6Q239 336.25 228.4 338.1L217.75 340" stroke="#9a9a9a" stroke-width=".5"/><path d="M216 328Q232 327 238.0 325.5Q244 324 245.5 325.5Q247 327 245.0 329.0Q243 331 237.5 332.0Q232 333 224.0 333.5L216 334" stroke="#9a9a9a" stroke-width=".5"/><path d="M215.7 346.7Q224 349.2 229.8 347.1Q235.7 345 241.5 341.6Q247.3 338.3 251.1 335.0L254.8 331.7" stroke="#9a9a9a" stroke-width=".5"/><path d="M215.7 355Q227.3 356.7 234.0 353.8Q240.7 350.8 246.5 347.1Q252.3 343.3 255.2 339.1Q258.2 335 258.6 332.5L259 330" stroke="#9a9a9a" stroke-width=".5"/><path d="M215.7 362.5Q229 362.5 236.5 359.6Q244 356.7 250.7 352.5Q257.3 348.3 259.8 344.1Q262.3 340 262.8 336.6L263.2 333.3" stroke="#9a9a9a" stroke-width=".5"/><path d="M215.7 369.2Q230.7 369.2 239.0 365.9Q247.3 362.5 254.0 357.9Q260.7 353.3 263.6 349.6L266.5 345.8" stroke="#9a9a9a" stroke-width=".5"/><path d="M215.7 375Q224 375 227.3 377.5Q230.7 380 231.1 382.1L231.5 384.2" stroke="#9a9a9a" stroke-width=".5"/><path d="M230.7 373.3Q249 365.8 256.5 360.4Q264 355 267.4 351.6L270.7 348.3" stroke="#9a9a9a" stroke-width=".5"/><path d="M216 316Q226 316.5 231.0 315.8Q236 315 239.5 313.0L243 311" stroke="#9a9a9a" stroke-width=".5"/><path d="M216.500 283.750L222 301L228 318L232.750 332.500" stroke="#d9473a" stroke-width=".7" stroke-dasharray="1.800 1.200"/><path d="M234 336.700L224 341.500L215.700 345.800" stroke="#d9473a" stroke-width=".6" stroke-dasharray="1.600 1.200"/><path d="M220.500 303l3 2.400M224 312l2.600 2M226.800 322.500l2.400 1.600" stroke="#333" stroke-width=".9"/><path d="M230.700 340.800L233.200 346.700M234.800 332.500L240.700 330.800" stroke="#222" stroke-width="1.100"/><path d="M254.5 323.5Q256.2 329 257.2 331.6Q258.2 334.1 260.3 338.8Q262.4 343.5 265.2 346.1Q268.1 348.7 271.2 349.8L274.4 350.8" stroke="#6aa574" stroke-width=".6"/><path d="M231.500 384.200L273.200 345.800" stroke="#4a5fd0" stroke-width=".6" stroke-dasharray="3 1 .8 1"/><path d="M216 387.500L231 385.500" stroke="#b06ac0" stroke-width=".6" stroke-dasharray="1.500 1"/><path d="M218 283l2 3M217 288l2 2" stroke="#d9473a" stroke-width=".5"/></g><g stroke="#2443d6" fill="none"><path d="M294.4 244.90H760.4" stroke-width="1.7"/><path d="M294.4 249.12H760.4" stroke-width="1.2"/><path d="M294.4 253.34H760.4" stroke-width="1.2"/><path d="M294.4 257.56H760.4" stroke-width="1.2"/><path d="M294.4 261.78H760.4" stroke-width="1.2"/><path d="M294.4 266.00H760.4" stroke-width="1.7"/><path d="M294.4 243.1V267.8" stroke-width="1.400"/><path d="M341.0 243.1V267.8" stroke-width="1.400"/><path d="M387.6 243.1V267.8" stroke-width="1.400"/><path d="M434.2 243.1V267.8" stroke-width="1.400"/><path d="M480.8 243.1V267.8" stroke-width="1.400"/><path d="M527.4 243.1V267.8" stroke-width="1.400"/><path d="M574.0 243.1V267.8" stroke-width="1.400"/><path d="M620.6 243.1V267.8" stroke-width="1.400"/><path d="M667.2 243.1V267.8" stroke-width="1.400"/><path d="M713.8 243.1V267.8" stroke-width="1.400"/><path d="M760.4 243.1V267.8" stroke-width="1.400"/><path d="M306.0 243.70000000000002V246.1M306.0 264.8V267.2" stroke-width=".9"/><path d="M317.7 243.70000000000002V246.1M317.7 264.8V267.2" stroke-width=".9"/><path d="M329.3 243.70000000000002V246.1M329.3 264.8V267.2" stroke-width=".9"/><path d="M352.6 243.70000000000002V246.1M352.6 264.8V267.2" stroke-width=".9"/><path d="M364.3 243.70000000000002V246.1M364.3 264.8V267.2" stroke-width=".9"/><path d="M375.9 243.70000000000002V246.1M375.9 264.8V267.2" stroke-width=".9"/><path d="M399.2 243.70000000000002V246.1M399.2 264.8V267.2" stroke-width=".9"/><path d="M410.9 243.70000000000002V246.1M410.9 264.8V267.2" stroke-width=".9"/><path d="M422.5 243.70000000000002V246.1M422.5 264.8V267.2" stroke-width=".9"/><path d="M445.9 243.70000000000002V246.1M445.9 264.8V267.2" stroke-width=".9"/><path d="M457.5 243.70000000000002V246.1M457.5 264.8V267.2" stroke-width=".9"/><path d="M469.1 243.70000000000002V246.1M469.1 264.8V267.2" stroke-width=".9"/><path d="M492.4 243.70000000000002V246.1M492.4 264.8V267.2" stroke-width=".9"/><path d="M504.1 243.70000000000002V246.1M504.1 264.8V267.2" stroke-width=".9"/><path d="M515.8 243.70000000000002V246.1M515.8 264.8V267.2" stroke-width=".9"/><path d="M539.0 243.70000000000002V246.1M539.0 264.8V267.2" stroke-width=".9"/><path d="M550.7 243.70000000000002V246.1M550.7 264.8V267.2" stroke-width=".9"/><path d="M562.3 243.70000000000002V246.1M562.3 264.8V267.2" stroke-width=".9"/><path d="M585.6 243.70000000000002V246.1M585.6 264.8V267.2" stroke-width=".9"/><path d="M597.3 243.70000000000002V246.1M597.3 264.8V267.2" stroke-width=".9"/><path d="M609.0 243.70000000000002V246.1M609.0 264.8V267.2" stroke-width=".9"/><path d="M632.2 243.70000000000002V246.1M632.2 264.8V267.2" stroke-width=".9"/><path d="M643.9 243.70000000000002V246.1M643.9 264.8V267.2" stroke-width=".9"/><path d="M655.5 243.70000000000002V246.1M655.5 264.8V267.2" stroke-width=".9"/><path d="M678.8 243.70000000000002V246.1M678.8 264.8V267.2" stroke-width=".9"/><path d="M690.5 243.70000000000002V246.1M690.5 264.8V267.2" stroke-width=".9"/><path d="M702.1 243.70000000000002V246.1M702.1 264.8V267.2" stroke-width=".9"/><path d="M725.5 243.70000000000002V246.1M725.5 264.8V267.2" stroke-width=".9"/><path d="M737.1 243.70000000000002V246.1M737.1 264.8V267.2" stroke-width=".9"/><path d="M748.8 243.70000000000002V246.1M748.8 264.8V267.2" stroke-width=".9"/></g><ellipse cx="294.400" cy="266" rx="3.200" ry="2.200" fill="#2443d6"/><rect x="484.300" y="221.500" width="86" height="9.300" fill="#fff" stroke="#2a3c9c" stroke-width="1.100"/><path d="M343 253.800L689 255.100L689 256.100L620 257.300L575 257.700L520 256.500L470 255.100L400 254.500L343 254.300Z" fill="#c9c9d2"/><path d="M343 254.300L400 254.500L470 255.100L520 256.500L575 257.700L620 257.300L689 256.100" stroke="#8a7f86" stroke-width=".45" fill="none"/><path d="M343 253.800L689 255.100" stroke="#9a9098" stroke-width=".4" fill="none"/><path d="M343 254.100L470 254.900" stroke="#c98078" stroke-width=".5" fill="none"/><rect x="367.5" y="253.9" width="1" height="1" fill="#3a3540"/><rect x="379.5" y="253.9" width="1" height="1" fill="#3a3540"/><rect x="389.5" y="254.0" width="1" height="1" fill="#3a3540"/><rect x="447.5" y="254.4" width="1" height="1" fill="#3a3540"/><rect x="461.5" y="254.5" width="1" height="1" fill="#3a3540"/><rect x="474.5" y="254.7" width="1" height="1" fill="#3a3540"/><rect x="489.5" y="255.2" width="1" height="1" fill="#3a3540"/><rect x="500.5" y="255.5" width="1" height="1" fill="#3a3540"/><rect x="559.5" y="256.9" width="1" height="1" fill="#3a3540"/><rect x="574.5" y="257.1" width="1" height="1" fill="#3a3540"/><rect x="596.5" y="257.0" width="1" height="1" fill="#3a3540"/><rect x="611.5" y="256.8" width="1" height="1" fill="#3a3540"/><rect x="633.5" y="256.5" width="1" height="1" fill="#3a3540"/><rect x="659.5" y="256.1" width="1" height="1" fill="#3a3540"/><path d="M689 254.600V257.400" stroke="#777" stroke-width=".5"/><g fill="none"><path d="M294.20 287.9V354.6" stroke="#5a5a66" stroke-width=".45"/><path d="M303.56 287.9V354.6" stroke="#5a5a66" stroke-width=".45"/><path d="M312.92 287.9V354.6" stroke="#5a5a66" stroke-width=".45"/><path d="M322.28 287.9V354.6" stroke="#5a5a66" stroke-width=".45"/><path d="M331.64 287.9V354.6" stroke="#5a5a66" stroke-width=".45"/><path d="M340.99 287.9V354.6" stroke="#5a5a66" stroke-width=".45"/><path d="M350.35 287.9V354.6" stroke="#5a5a66" stroke-width=".45"/><path d="M359.71 287.9V354.6" stroke="#5a5a66" stroke-width=".45"/><path d="M369.07 287.9V354.6" stroke="#5a5a66" stroke-width=".45"/><path d="M378.43 287.9V354.6" stroke="#5a5a66" stroke-width=".45"/><path d="M387.79 287.9V354.6" stroke="#5a5a66" stroke-width=".45"/><path d="M397.15 287.9V354.6" stroke="#5a5a66" stroke-width=".45"/><path d="M406.51 287.9V354.6" stroke="#5a5a66" stroke-width=".45"/><path d="M415.86 287.9V354.6" stroke="#5a5a66" stroke-width=".45"/><path d="M425.22 287.9V354.6" stroke="#5a5a66" stroke-width=".45"/><path d="M434.58 287.9V354.6" stroke="#5a5a66" stroke-width=".45"/><path d="M443.94 287.9V354.6" stroke="#5a5a66" stroke-width=".45"/><path d="M453.30 287.9V354.6" stroke="#5a5a66" stroke-width=".45"/><path d="M294.2 287.90H453.3" stroke="#5a5a66" stroke-width=".45"/><path d="M294.2 296.24H453.3" stroke="#5a5a66" stroke-width=".45"/><path d="M294.2 304.57H453.3" stroke="#5a5a66" stroke-width=".45"/><path d="M294.2 312.91H453.3" stroke="#5a5a66" stroke-width=".45"/><path d="M294.2 321.25H453.3" stroke="#5a5a66" stroke-width=".45"/><path d="M294.2 329.59H453.3" stroke="#5a5a66" stroke-width=".45"/><path d="M294.2 337.93H453.3" stroke="#5a5a66" stroke-width=".45"/><path d="M294.2 346.26H453.3" stroke="#5a5a66" stroke-width=".45"/><path d="M294.2 354.60H453.3" stroke="#5a5a66" stroke-width=".45"/><rect x="294.2" y="287.9" width="159.10000000000002" height="66.70000000000005" stroke="#4a58d2" stroke-width=".8"/><path d="M292.90 287.9h2.600" stroke="#1a2478" stroke-width="1.200"/><path d="M294.20 353.8v1.600" stroke="#3c4bd0" stroke-width=".8"/><path d="M302.26 287.9h2.600" stroke="#1a2478" stroke-width="1.200"/><path d="M303.56 353.8v1.600" stroke="#3c4bd0" stroke-width=".8"/><path d="M311.62 287.9h2.600" stroke="#1a2478" stroke-width="1.200"/><path d="M312.92 353.8v1.600" stroke="#3c4bd0" stroke-width=".8"/><path d="M320.98 287.9h2.600" stroke="#1a2478" stroke-width="1.200"/><path d="M322.28 353.8v1.600" stroke="#3c4bd0" stroke-width=".8"/><path d="M330.34 287.9h2.600" stroke="#1a2478" stroke-width="1.200"/><path d="M331.64 353.8v1.600" stroke="#3c4bd0" stroke-width=".8"/><path d="M339.69 287.9h2.600" stroke="#1a2478" stroke-width="1.200"/><path d="M340.99 353.8v1.600" stroke="#3c4bd0" stroke-width=".8"/><path d="M349.05 287.9h2.600" stroke="#1a2478" stroke-width="1.200"/><path d="M350.35 353.8v1.600" stroke="#3c4bd0" stroke-width=".8"/><path d="M358.41 287.9h2.600" stroke="#1a2478" stroke-width="1.200"/><path d="M359.71 353.8v1.600" stroke="#3c4bd0" stroke-width=".8"/><path d="M367.77 287.9h2.600" stroke="#1a2478" stroke-width="1.200"/><path d="M369.07 353.8v1.600" stroke="#3c4bd0" stroke-width=".8"/><path d="M377.13 287.9h2.600" stroke="#1a2478" stroke-width="1.200"/><path d="M378.43 353.8v1.600" stroke="#3c4bd0" stroke-width=".8"/><path d="M386.49 287.9h2.600" stroke="#1a2478" stroke-width="1.200"/><path d="M387.79 353.8v1.600" stroke="#3c4bd0" stroke-width=".8"/><path d="M395.85 287.9h2.600" stroke="#1a2478" stroke-width="1.200"/><path d="M397.15 353.8v1.600" stroke="#3c4bd0" stroke-width=".8"/><path d="M405.21 287.9h2.600" stroke="#1a2478" stroke-width="1.200"/><path d="M406.51 353.8v1.600" stroke="#3c4bd0" stroke-width=".8"/><path d="M414.56 287.9h2.600" stroke="#1a2478" stroke-width="1.200"/><path d="M415.86 353.8v1.600" stroke="#3c4bd0" stroke-width=".8"/><path d="M423.92 287.9h2.600" stroke="#1a2478" stroke-width="1.200"/><path d="M425.22 353.8v1.600" stroke="#3c4bd0" stroke-width=".8"/><path d="M433.28 287.9h2.600" stroke="#1a2478" stroke-width="1.200"/><path d="M434.58 353.8v1.600" stroke="#3c4bd0" stroke-width=".8"/><path d="M442.64 287.9h2.600" stroke="#1a2478" stroke-width="1.200"/><path d="M443.94 353.8v1.600" stroke="#3c4bd0" stroke-width=".8"/><path d="M452.00 287.9h2.600" stroke="#1a2478" stroke-width="1.200"/><path d="M453.30 353.8v1.600" stroke="#3c4bd0" stroke-width=".8"/><path d="M293.3 287.90h1.800M452.40000000000003 287.90h1.800" stroke="#2a38b8" stroke-width=".9"/><path d="M293.3 296.24h1.800M452.40000000000003 296.24h1.800" stroke="#2a38b8" stroke-width=".9"/><path d="M293.3 304.57h1.800M452.40000000000003 304.57h1.800" stroke="#2a38b8" stroke-width=".9"/><path d="M293.3 312.91h1.800M452.40000000000003 312.91h1.800" stroke="#2a38b8" stroke-width=".9"/><path d="M293.3 321.25h1.800M452.40000000000003 321.25h1.800" stroke="#2a38b8" stroke-width=".9"/><path d="M293.3 329.59h1.800M452.40000000000003 329.59h1.800" stroke="#2a38b8" stroke-width=".9"/><path d="M293.3 337.93h1.800M452.40000000000003 337.93h1.800" stroke="#2a38b8" stroke-width=".9"/><path d="M293.3 346.26h1.800M452.40000000000003 346.26h1.800" stroke="#2a38b8" stroke-width=".9"/><path d="M293.3 354.60h1.800M452.40000000000003 354.60h1.800" stroke="#2a38b8" stroke-width=".9"/></g><rect x="362.900" y="275.400" width="22.300" height="4.200" fill="#cfcfd2" stroke="#666" stroke-width=".4"/><path d="M364.500 277.500h19" stroke="#333" stroke-width="1.100" stroke-dasharray="2.600 .7 1.800 .6"/><path d="M372.500 282.700h3.200" stroke="#555" stroke-width=".7"/><path d="M289.400 320v2.600" stroke="#444" stroke-width=".9"/><path d="M304.600 309.200L313.300 310.400L332.100 311.300L350.800 313.300L361.300 320.800L369.600 322.300L380 326.500L392.500 330.600L405 332.700L415.400 331.700L425.800 328.500L440.400 325.400" stroke="#d46a64" stroke-width=".6" fill="none"/><path d="M304.600 309.200L332.100 310.400L352.900 311.900L363.300 315.600L392.500 326L402.900 329.200L413.300 328.100L440.400 325" stroke="#4a2f33" stroke-width=".7" fill="none"/><rect x="341.9" y="310.59999999999997" width="1.200" height="1.200" fill="#222"/><rect x="352.29999999999995" y="311.29999999999995" width="1.200" height="1.200" fill="#222"/><rect x="362.7" y="315.0" width="1.200" height="1.200" fill="#222"/><rect x="391.9" y="325.4" width="1.200" height="1.200" fill="#222"/><rect x="402.29999999999995" y="328.59999999999997" width="1.200" height="1.200" fill="#222"/><rect x="412.7" y="327.5" width="1.200" height="1.200" fill="#222"/><g fill="none"><path d="M533.75 300.4V342.2" stroke="#5a5a66" stroke-width=".45"/><path d="M543.39 300.4V342.2" stroke="#5a5a66" stroke-width=".45"/><path d="M553.04 300.4V342.2" stroke="#5a5a66" stroke-width=".45"/><path d="M562.68 300.4V342.2" stroke="#5a5a66" stroke-width=".45"/><path d="M572.32 300.4V342.2" stroke="#5a5a66" stroke-width=".45"/><path d="M581.96 300.4V342.2" stroke="#5a5a66" stroke-width=".45"/><path d="M591.61 300.4V342.2" stroke="#5a5a66" stroke-width=".45"/><path d="M601.25 300.4V342.2" stroke="#5a5a66" stroke-width=".45"/><path d="M533.75 300.40H601.25" stroke="#5a5a66" stroke-width=".45"/><path d="M533.75 308.76H601.25" stroke="#5a5a66" stroke-width=".45"/><path d="M533.75 317.12H601.25" stroke="#5a5a66" stroke-width=".45"/><path d="M533.75 325.48H601.25" stroke="#5a5a66" stroke-width=".45"/><path d="M533.75 333.84H601.25" stroke="#5a5a66" stroke-width=".45"/><path d="M533.75 342.20H601.25" stroke="#5a5a66" stroke-width=".45"/><rect x="533.75" y="300.4" width="67.5" height="41.80000000000001" stroke="#4a58d2" stroke-width=".8"/><path d="M532.45 300.4h2.600" stroke="#1a2478" stroke-width="1.200"/><path d="M533.75 341.4v1.600" stroke="#3c4bd0" stroke-width=".8"/><path d="M542.09 300.4h2.600" stroke="#1a2478" stroke-width="1.200"/><path d="M543.39 341.4v1.600" stroke="#3c4bd0" stroke-width=".8"/><path d="M551.74 300.4h2.600" stroke="#1a2478" stroke-width="1.200"/><path d="M553.04 341.4v1.600" stroke="#3c4bd0" stroke-width=".8"/><path d="M561.38 300.4h2.600" stroke="#1a2478" stroke-width="1.200"/><path d="M562.68 341.4v1.600" stroke="#3c4bd0" stroke-width=".8"/><path d="M571.02 300.4h2.600" stroke="#1a2478" stroke-width="1.200"/><path d="M572.32 341.4v1.600" stroke="#3c4bd0" stroke-width=".8"/><path d="M580.66 300.4h2.600" stroke="#1a2478" stroke-width="1.200"/><path d="M581.96 341.4v1.600" stroke="#3c4bd0" stroke-width=".8"/><path d="M590.31 300.4h2.600" stroke="#1a2478" stroke-width="1.200"/><path d="M591.61 341.4v1.600" stroke="#3c4bd0" stroke-width=".8"/><path d="M599.95 300.4h2.600" stroke="#1a2478" stroke-width="1.200"/><path d="M601.25 341.4v1.600" stroke="#3c4bd0" stroke-width=".8"/><path d="M532.85 300.40h1.800M600.35 300.40h1.800" stroke="#2a38b8" stroke-width=".9"/><path d="M532.85 308.76h1.800M600.35 308.76h1.800" stroke="#2a38b8" stroke-width=".9"/><path d="M532.85 317.12h1.800M600.35 317.12h1.800" stroke="#2a38b8" stroke-width=".9"/><path d="M532.85 325.48h1.800M600.35 325.48h1.800" stroke="#2a38b8" stroke-width=".9"/><path d="M532.85 333.84h1.800M600.35 333.84h1.800" stroke="#2a38b8" stroke-width=".9"/><path d="M532.85 342.20h1.800M600.35 342.20h1.800" stroke="#2a38b8" stroke-width=".9"/></g><rect x="556.250" y="287.800" width="21" height="3.800" fill="#e4e4e6" stroke="#444" stroke-width=".5"/><path d="M557.800 289.700h18" stroke="#333" stroke-width=".9" stroke-dasharray="2.400 .7 1.600 .6"/><path d="M565.600 295h3" stroke="#555" stroke-width=".7"/><path d="M529 319.800v2.400" stroke="#444" stroke-width=".8"/><path d="M543.500 321.600L586.250 319.300" stroke="#c2453c" stroke-width=".8" fill="none"/><path d="M320 226V260" stroke="#555" stroke-width=".6"/><rect x="318.800" y="243.300" width="2.400" height="2.400" fill="#fff" stroke="#333" stroke-width=".5"/><path d="M320.600 245.400v6.600l1.500-1.400 1 2.200 1-.5-1-2.100h2z" fill="#fff" stroke="#222" stroke-width=".5"/><path d="M226 410V432H249" stroke="#555" stroke-width=".7" fill="none"/><rect x="224.600" y="430.600" width="2.800" height="2.800" fill="#fff" stroke="#555" stroke-width=".6"/><path d="M227.400 403l1.800 2.400 1.800-2.400M229.200 405.400v3" stroke="#555" stroke-width=".7" fill="none"/><path d="M253.400 426.600l4.400 4.800M257.800 426.600l-4.400 4.800" stroke="#555" stroke-width=".7" fill="none"/><circle cx="904.500" cy="123" r="27" fill="none" stroke="#f8f9f9" stroke-width="9"/><rect x="891.100" y="111.250" width="27" height="23.250" fill="#e3e5e7" stroke="#b3b7bc" stroke-width=".8"/><rect x="894.600" y="114.600" width="20" height="16.600" fill="#eaecee"/><rect x="928.200" y="179.500" width="17" height="91.500" rx="1.500" fill="#f2f3f4" stroke="#dfe1e3" stroke-width=".7"/><circle cx="936.700" cy="189" r="3.600" fill="none" stroke="#e6e8ea" stroke-width=".8"/><circle cx="936.700" cy="205" r="3.600" fill="none" stroke="#e6e8ea" stroke-width=".8"/><circle cx="936.700" cy="221" r="3.600" fill="none" stroke="#e6e8ea" stroke-width=".8"/><circle cx="936.700" cy="238" r="3.600" fill="none" stroke="#e6e8ea" stroke-width=".8"/><circle cx="936.700" cy="255" r="3.600" fill="none" stroke="#e6e8ea" stroke-width=".8"/><rect x="893" y="161.900" width="21.400" height="6.300" fill="#e7e9eb"/><rect x="915.600" y="82.200" width="5" height="1.600" fill="none" stroke="#555e69" stroke-width=".8"/><rect x="926.600" y="80.600" width="3.600" height="3.600" fill="none" stroke="#555e69" stroke-width=".8"/><rect x="925.400" y="81.800" width="3.600" height="3.600" fill="#fff" stroke="#555e69" stroke-width=".8"/><rect x="936" y="80.200" width="5.600" height="5" fill="none" stroke="#555e69" stroke-width=".7"/><path d="M937.200 81.200l3.200 3M940.400 81.200l-3.200 3" stroke="#555e69" stroke-width=".8"/></svg>
<div class="t" style="left:486.90px;top:221.75px;font-size:6.9px;line-height:8.9px;color:#1c3ab8;transform-origin:0 50%;transform:scaleX(1.123);text-shadow:0 0 .5px #1c3ab8;">Jordan</div>
<div class="t" style="left:515.00px;top:221.75px;font-size:6.9px;line-height:8.9px;color:#1c3ab8;transform-origin:0 50%;transform:scaleX(1.185);text-shadow:0 0 .5px #1c3ab8;">Court</div>
<div class="t" style="left:539.40px;top:221.75px;font-size:6.9px;line-height:8.9px;color:#1c3ab8;transform-origin:0 50%;transform:scaleX(0.972);text-shadow:0 0 .5px #1c3ab8;">PROFILE</div>
<div class="t" style="left:520.00px;top:233.40px;font-size:4.2px;line-height:6.2px;color:#1c38cc;transform-origin:0 50%;transform:scaleX(1.054);font-weight:bold;text-shadow:0 0 .4px #1c38cc;">Station</div>
<div class="t" style="left:286.30px;top:238.40px;font-size:5.2px;line-height:7.2px;color:#1c38cc;transform-origin:0 50%;transform:scaleX(1.205);font-weight:bold;text-shadow:0 0 .4px #1c38cc;">-3+28</div>
<div class="t" style="left:334.60px;top:238.40px;font-size:5.2px;line-height:7.2px;color:#1c38cc;transform-origin:0 50%;transform:scaleX(1.093);font-weight:bold;text-shadow:0 0 .4px #1c38cc;">0+00</div>
<div class="t" style="left:381.20px;top:238.40px;font-size:5.2px;line-height:7.2px;color:#1c38cc;transform-origin:0 50%;transform:scaleX(1.093);font-weight:bold;text-shadow:0 0 .4px #1c38cc;">3+28</div>
<div class="t" style="left:427.80px;top:238.40px;font-size:5.2px;line-height:7.2px;color:#1c38cc;transform-origin:0 50%;transform:scaleX(1.093);font-weight:bold;text-shadow:0 0 .4px #1c38cc;">6+56</div>
<div class="t" style="left:474.40px;top:238.40px;font-size:5.2px;line-height:7.2px;color:#1c38cc;transform-origin:0 50%;transform:scaleX(1.093);font-weight:bold;text-shadow:0 0 .4px #1c38cc;">9+84</div>
<div class="t" style="left:521.00px;top:238.40px;font-size:5.2px;line-height:7.2px;color:#1c38cc;transform-origin:0 50%;transform:scaleX(1.013);font-weight:bold;text-shadow:0 0 .4px #1c38cc;">13+12</div>
<div class="t" style="left:567.60px;top:238.40px;font-size:5.2px;line-height:7.2px;color:#1c38cc;transform-origin:0 50%;transform:scaleX(1.013);font-weight:bold;text-shadow:0 0 .4px #1c38cc;">16+40</div>
<div class="t" style="left:614.20px;top:238.40px;font-size:5.2px;line-height:7.2px;color:#1c38cc;transform-origin:0 50%;transform:scaleX(1.013);font-weight:bold;text-shadow:0 0 .4px #1c38cc;">19+69</div>
<div class="t" style="left:660.80px;top:238.40px;font-size:5.2px;line-height:7.2px;color:#1c38cc;transform-origin:0 50%;transform:scaleX(1.013);font-weight:bold;text-shadow:0 0 .4px #1c38cc;">22+97</div>
<div class="t" style="left:707.40px;top:238.40px;font-size:5.2px;line-height:7.2px;color:#1c38cc;transform-origin:0 50%;transform:scaleX(1.013);font-weight:bold;text-shadow:0 0 .4px #1c38cc;">26+25</div>
<div class="t" style="left:752.90px;top:238.40px;font-size:5.2px;line-height:7.2px;color:#1c38cc;transform-origin:0 50%;transform:scaleX(1.068);font-weight:bold;text-shadow:0 0 .4px #1c38cc;">29+53</div>
<div class="t" style="left:286.00px;top:241.75px;font-size:4.3px;line-height:6.3px;color:#1c38cc;transform-origin:0 50%;transform:scaleX(1.059);font-weight:bold;text-shadow:0 0 .4px #1c38cc;">263</div>
<div class="t" style="left:762.00px;top:241.75px;font-size:4.3px;line-height:6.3px;color:#1c38cc;transform-origin:0 50%;transform:scaleX(1.059);font-weight:bold;text-shadow:0 0 .4px #1c38cc;">263</div>
<div class="t" style="left:286.00px;top:245.97px;font-size:4.3px;line-height:6.3px;color:#1c38cc;transform-origin:0 50%;transform:scaleX(1.059);font-weight:bold;text-shadow:0 0 .4px #1c38cc;">230</div>
<div class="t" style="left:762.00px;top:245.97px;font-size:4.3px;line-height:6.3px;color:#1c38cc;transform-origin:0 50%;transform:scaleX(1.059);font-weight:bold;text-shadow:0 0 .4px #1c38cc;">230</div>
<div class="t" style="left:286.00px;top:250.19px;font-size:4.3px;line-height:6.3px;color:#1c38cc;transform-origin:0 50%;transform:scaleX(1.059);font-weight:bold;text-shadow:0 0 .4px #1c38cc;">197</div>
<div class="t" style="left:762.00px;top:250.19px;font-size:4.3px;line-height:6.3px;color:#1c38cc;transform-origin:0 50%;transform:scaleX(1.059);font-weight:bold;text-shadow:0 0 .4px #1c38cc;">197</div>
<div class="t" style="left:286.00px;top:254.41px;font-size:4.3px;line-height:6.3px;color:#1c38cc;transform-origin:0 50%;transform:scaleX(1.059);font-weight:bold;text-shadow:0 0 .4px #1c38cc;">164</div>
<div class="t" style="left:762.00px;top:254.41px;font-size:4.3px;line-height:6.3px;color:#1c38cc;transform-origin:0 50%;transform:scaleX(1.059);font-weight:bold;text-shadow:0 0 .4px #1c38cc;">164</div>
<div class="t" style="left:286.00px;top:258.63px;font-size:4.3px;line-height:6.3px;color:#1c38cc;transform-origin:0 50%;transform:scaleX(1.059);font-weight:bold;text-shadow:0 0 .4px #1c38cc;">131</div>
<div class="t" style="left:762.00px;top:258.63px;font-size:4.3px;line-height:6.3px;color:#1c38cc;transform-origin:0 50%;transform:scaleX(1.059);font-weight:bold;text-shadow:0 0 .4px #1c38cc;">131</div>
<div class="t" style="left:288.60px;top:262.85px;font-size:4.3px;line-height:6.3px;color:#1c38cc;transform-origin:0 50%;transform:scaleX(1.045);font-weight:bold;text-shadow:0 0 .4px #1c38cc;">98</div>
<div class="t" style="left:762.00px;top:262.85px;font-size:4.3px;line-height:6.3px;color:#1c38cc;transform-origin:0 50%;transform:scaleX(1.045);font-weight:bold;text-shadow:0 0 .4px #1c38cc;">98</div>
<div class="t" style="left:126.8px;top:251.700px;width:300px;height:8px;line-height:8px;text-align:center;font-size:5.2px;font-weight:bold;color:#1c38cc;transform:rotate(-90deg);letter-spacing:-.25px;text-shadow:0 0 .4px #1c38cc">Elevation</div>
<div class="t" style="left:804.5px;width:200px;text-align:center;top:119.2px;font-size:5.6px;line-height:7.6px;color:#7a828b;font-weight:bold;">TOP</div>
<div class="t" style="left:804.2px;width:200px;text-align:center;top:91.85px;font-size:10.5px;line-height:12.5px;color:#cdd0d4;font-weight:bold;">N</div>
<div class="t" style="left:804.5px;width:200px;text-align:center;top:141.75px;font-size:10.5px;line-height:12.5px;color:#cdd0d4;font-weight:bold;">S</div>
<div class="t" style="left:776.1px;width:200px;text-align:center;top:116.35px;font-size:10.5px;line-height:12.5px;color:#cdd0d4;font-weight:bold;">W</div>
<div class="t" style="left:832px;width:200px;text-align:center;top:116.35px;font-size:10.5px;line-height:12.5px;color:#cdd0d4;font-weight:bold;">E</div>
<div class="t" style="left:895.00px;top:161.80px;font-size:4.18px;line-height:6.4px;color:#9aa1a9;transform-origin:0 50%;transform:scaleX(1.025);letter-spacing:0.000px;">WCS</div>
<div class="a" style="left:908.5px;top:164.2px;width:0;height:0;border-left:1.5px solid transparent;border-right:1.5px solid transparent;border-top:1.8px solid #b3b8be"></div>
<div class="a" style="left:430px;top:429.2px;width:26.5px;height:11.8px;background:#70767e;"></div>
<div class="a" style="left:456.5px;top:429.2px;width:275px;height:11.8px;background:#ffffff;border-top:0.8px solid #b9bec4;border-right:0.8px solid #b9bec4;"></div>
<div class="a" style="left:433.4px;top:431.5px;width:0.8px;height:1px;background:#e6e8ea;"></div>
<div class="a" style="left:433.4px;top:433.5px;width:0.8px;height:1px;background:#e6e8ea;"></div>
<div class="a" style="left:433.4px;top:435.5px;width:0.8px;height:1px;background:#e6e8ea;"></div>
<div class="a" style="left:433.4px;top:437.5px;width:0.8px;height:1px;background:#e6e8ea;"></div>
<svg class="a" style="left:436px;top:430.5px" width="20" height="9" viewBox="0 0 20 9"><path d="M1.600 2.200l3.800 3.800M5.400 2.200l-3.800 3.800" stroke="#f4f5f6" stroke-width=".9"/><path d="M11 7.400l3.600-3.600" stroke="#f4f5f6" stroke-width="1.300"/><circle cx="15.400" cy="3" r="1.700" fill="none" stroke="#f4f5f6" stroke-width="1"/></svg>
<svg class="a" style="left:459px;top:431.5px" width="14" height="8" viewBox="0 0 14 8"><rect x=".8" y="1" width="6.600" height="5.400" fill="#fff" stroke="#7d8590" stroke-width=".6"/><rect x=".8" y="1" width="6.600" height="1.300" fill="#7d8590"/><path d="M9.200 3.200l1.400 1.600 1.400-1.600z" fill="#6b7480"/></svg>
<div class="t" style="left:476.7px;top:431.7px;font-size:5.6px;line-height:8px;color:#b0b5bc;letter-spacing:.14px;font-family:'Liberation Mono',monospace;font-style:italic">Type a command</div>
<div class="a" style="left:725px;top:434.6px;width:0;height:0;border-left:1.7px solid transparent;border-right:1.7px solid transparent;border-bottom:2px solid #6b7480"></div>
<div class="a" style="left:0px;top:441px;width:960px;height:21px;background:#212933;"></div>
<div class="a" style="left:0px;top:441px;width:7px;height:21px;background:#2f3743;"></div>
<div class="a" style="left:7.5px;top:441.8px;width:26.5px;height:7px;background:#3a4351;border-radius:0 0 1.5px 1.5px"></div>
<div class="t" style="left:11.70px;top:441.60px;font-size:5.70px;line-height:8px;color:#ffffff;transform-origin:0 50%;transform:scaleX(1.008);letter-spacing:0.000px;font-weight:bold;">Model</div>
<div class="a" style="left:36px;top:441.8px;width:29px;height:7px;background:#2b333f;border-radius:0 0 1.5px 1.5px"></div>
<div class="t" style="left:40.80px;top:441.60px;font-size:5.70px;line-height:8px;color:#a9b1bb;transform-origin:0 50%;transform:scaleX(0.986);letter-spacing:0.000px;">Layout1</div>
<div class="a" style="left:68.5px;top:441.8px;width:29px;height:7px;background:#2b333f;border-radius:0 0 1.5px 1.5px"></div>
<div class="t" style="left:73.30px;top:441.60px;font-size:5.70px;line-height:8px;color:#a9b1bb;transform-origin:0 50%;transform:scaleX(0.947);letter-spacing:0.000px;">Layout2</div>
<svg class="a" style="left:103.5px;top:442px" width="8" height="8" viewBox="0 0 8 8"><path d="M4 1.600v4.800M1.600 4h4.800" stroke="#c3cad2" stroke-width=".9"/></svg>
<div class="a" style="left:635px;top:451px;width:325px;height:10.6px;background:#2d3642;"></div>
<div class="t" style="left:636.80px;top:452.50px;font-size:5.32px;line-height:7.6px;color:#dfe3e8;transform-origin:0 50%;transform:scaleX(1.015);letter-spacing:0.000px;font-weight:bold;">MODEL</div>
<div class="a" style="left:659.6px;top:451.5px;width:0.7px;height:9.6px;background:#222a34;"></div>
<div class="a" style="left:692px;top:451.5px;width:0.7px;height:9.6px;background:#222a34;"></div>
<div class="a" style="left:724.5px;top:451.5px;width:0.7px;height:9.6px;background:#222a34;"></div>
<div class="a" style="left:744.5px;top:451.5px;width:0.7px;height:9.6px;background:#222a34;"></div>
<div class="a" style="left:776.5px;top:451.5px;width:0.7px;height:9.6px;background:#222a34;"></div>
<div class="a" style="left:812.5px;top:451.5px;width:0.7px;height:9.6px;background:#222a34;"></div>
<div class="a" style="left:838.5px;top:451.5px;width:0.7px;height:9.6px;background:#222a34;"></div>
<div class="a" style="left:859.5px;top:451.5px;width:0.7px;height:9.6px;background:#222a34;"></div>
<div class="a" style="left:872px;top:451.5px;width:0.7px;height:9.6px;background:#222a34;"></div>
<div class="a" style="left:885.5px;top:451.5px;width:0.7px;height:9.6px;background:#222a34;"></div>
<div class="a" style="left:920px;top:451.5px;width:0.7px;height:9.6px;background:#222a34;"></div>
<div class="a" style="left:935px;top:451.5px;width:0.7px;height:9.6px;background:#222a34;"></div>
<div class="a" style="left:947px;top:451.5px;width:0.7px;height:9.6px;background:#222a34;"></div>
<svg class="a" style="left:0px;top:0px" width="960" height="480" viewBox="0 0 960 480"><g stroke="#cfd5db" stroke-width=".7" fill="none"><path d="M662 454.6h6.400M662 456.3h6.400M662 458.0h6.400M663.500 453.0v6.600M665.200 453.0v6.600M666.900 453.0v6.600"/></g><g stroke="#7e8894" stroke-width=".6" fill="none"><path d="M674.400 454.6h6.400M674.400 456.3h6.400M674.400 458.0h6.400M675.900 453.0v6.600M677.600 453.0v6.600M679.300 453.0v6.600"/></g><path d="M696 452.90000000000003V459.3H702" stroke="#cfd5db" stroke-width=".8" fill="none"/><path d="M707 459.1h6.600M710.300 458.90000000000003a3 3 0 1 1 3-3" stroke="#7e8894" stroke-width=".7" fill="none"/><path d="M731.200 454.1v4.600" stroke="#7e8894" stroke-width=".8"/><rect x="746.100" y="451.700" width="10.600" height="9.400" fill="#5a8fca"/><path d="M749 458.5l4.800-4.400" stroke="#dbe9f7" stroke-width=".9"/><circle cx="749" cy="458.5" r=".9" fill="#dbe9f7"/><rect x="757.800" y="451.700" width="11" height="9.400" fill="#5a8fca"/><rect x="760.300" y="453.5" width="6" height="5.600" fill="none" stroke="#e3effa" stroke-width=".8"/><rect x="778.500" y="451.700" width="12.800" height="9.400" fill="#4f86c6"/><path d="M784.8 452.7L785.9 456.7L788.4 459.5H786.8L784.8 457.5L782.8 459.5H781.1999999999999L783.6999999999999 456.7Z" fill="#f2f6fa"/><path d="M796.2 452.7L797.3000000000001 456.7L799.8000000000001 459.5H798.2L796.2 457.5L794.2 459.5H792.6L795.1 456.7Z" fill="#e8ebee"/><path d="M797.400 453.3l2.200-1M797.800 454.90000000000003l2.200.4" stroke="#e8ebee" stroke-width=".6"/><path d="M807.7 452.7L808.8000000000001 456.7L811.3000000000001 459.5H809.7L807.7 457.5L805.7 459.5H804.1L806.6 456.7Z" fill="#e8ebee"/><circle cx="845.800" cy="456.3" r="2.300" fill="none" stroke="#e8ebee" stroke-width="1.500"/><g stroke="#e8ebee" stroke-width="1.100"><path d="M845.800 452.3v1.400M845.800 458.90000000000003v1.400M841.800 456.3h1.400M848.400 456.3h1.400M843 453.5l1 1M847.600 458.1l1 1M843 459.1l1-1M847.600 454.5l1-1"/></g><path d="M866.100 452.90000000000003v6.800M862.700 456.3h6.800" stroke="#e8ebee" stroke-width="1.100"/><rect x="875.800" y="452.90000000000003" width="3.600" height="2.800" fill="none" stroke="#7e8894" stroke-width=".6"/><rect x="879.400" y="455.5" width="3.600" height="2.800" fill="none" stroke="#7e8894" stroke-width=".6"/><path d="M876.600 459.1h2.600M880.200 459.7h2.400" stroke="#7e8894" stroke-width=".6"/><rect x="887" y="451.700" width="31.400" height="9.400" fill="#34404f"/><circle cx="892.700" cy="456.6" r="2.600" fill="#4d8fd6"/><rect x="890.600" y="455.3" width="4.200" height="1.600" fill="#cfe2f5"/><rect x="921.600" y="452.3" width="6" height="4" fill="#3f8fdc"/><rect x="927" y="453.3" width="5.400" height="4" fill="#e6c84a"/><path d="M921.600 460.3l3.400-4.600 3 3 2-2 2.600 3.600z" fill="#5cb866"/><rect x="938" y="453.3" width="7" height="5.600" fill="none" stroke="#dfe3e8" stroke-width=".8"/><rect x="938.600" y="456.1" width="2.600" height="2.200" fill="#dfe3e8"/><path d="M942 454.5h2v2" stroke="#dfe3e8" stroke-width=".7" fill="none"/><path d="M950.200 453.7h7.200M950.200 456.3h7.200M950.200 458.90000000000003h7.200" stroke="#e8ebee" stroke-width="1.100"/></svg>
<div class="a" style="left:685.9px;top:455.3px;width:0;height:0;border-left:1.7px solid transparent;border-right:1.7px solid transparent;border-top:2.125px solid #cfd5db"></div>
<div class="a" style="left:719.3px;top:455.3px;width:0;height:0;border-left:1.7px solid transparent;border-right:1.7px solid transparent;border-top:2.125px solid #cfd5db"></div>
<div class="a" style="left:739.3px;top:455.3px;width:0;height:0;border-left:1.7px solid transparent;border-right:1.7px solid transparent;border-top:2.125px solid #cfd5db"></div>
<div class="a" style="left:771.8px;top:455.3px;width:0;height:0;border-left:1.7px solid transparent;border-right:1.7px solid transparent;border-top:2.125px solid #cfd5db"></div>
<div class="a" style="left:833.5px;top:455.3px;width:0;height:0;border-left:1.7px solid transparent;border-right:1.7px solid transparent;border-top:2.125px solid #cfd5db"></div>
<div class="a" style="left:854.1999999999999px;top:455.3px;width:0;height:0;border-left:1.7px solid transparent;border-right:1.7px solid transparent;border-top:2.125px solid #cfd5db"></div>
<div class="t" style="left:816.90px;top:452.50px;font-size:5.32px;line-height:7.6px;color:#cfd5db;transform-origin:0 50%;transform:scaleX(1.059);letter-spacing:0.000px;">1:500</div>
<div class="t" style="left:903.30px;top:452.50px;font-size:5.32px;line-height:7.6px;color:#cfd5db;transform-origin:0 50%;transform:scaleX(0.999);letter-spacing:0.000px;">3.500</div>
<div class="a" style="left:0px;top:461.6px;width:960px;height:18.4px;background:#2a1c1f;"></div>
<svg class="a" style="left:0px;top:0px" width="960" height="480" viewBox="0 0 960 480"><g fill="#f2f3f4"><path d="M8 468.0l3.500-.5v3.500H8zM12.100 467.4l4.100-.6v4.200h-4.100zM8 471.59999999999997h3.500v3.500l-3.500-.5zM12.100 471.59999999999997h4.100v4.200l-4.100-.6z"/></g><circle cx="37.200" cy="470.2" r="3" fill="none" stroke="#f2f3f4" stroke-width="1.100"/><path d="M35 472.59999999999997l-3 3.200" stroke="#f2f3f4" stroke-width="1.300"/><rect x="56.200" y="468.59999999999997" width="5.600" height="5.400" fill="none" stroke="#f2f3f4" stroke-width="1"/><path d="M63.600 467.2v8M55 467.2h1M55 475.2h1" stroke="#f2f3f4" stroke-width="1"/><rect x="62.400" y="470.2" width="2.400" height="2" fill="#2a1c1f"/><rect x="81" y="466.59999999999997" width="9.600" height="9.600" fill="#9a3cc4"/><rect x="86.500" y="466.59999999999997" width="4.100" height="9.600" fill="#c07be0"/><rect x="80" y="468.2" width="6.200" height="6.200" fill="#7b2aa8"/><path d="M81.600 473.0v-3.400l3 3.400v-3.400" stroke="#fff" stroke-width=".8" fill="none"/><ellipse cx="109.500" cy="470.2" rx="5" ry="3.600" fill="#d9dde2"/><circle cx="107.600" cy="469.4" r="1" fill="#d6483c"/><circle cx="110.600" cy="468.8" r="1" fill="#e6b83a"/><path d="M108 472.2l6 4" stroke="#3b78c4" stroke-width="2"/><ellipse cx="112.800" cy="473.8" rx="2.600" ry="1.800" fill="#3f86d6"/><rect x="130.800" y="466.2" width="7" height="10" rx=".6" fill="#3c4046"/><rect x="131.800" y="467.2" width="5" height="2.400" fill="#c9ced4"/><g fill="#8e959d"><rect x="131.800" y="470.59999999999997" width="1.300" height="1.200"/><rect x="133.650" y="470.59999999999997" width="1.300" height="1.200"/><rect x="135.500" y="470.59999999999997" width="1.300" height="1.200"/><rect x="131.800" y="472.8" width="1.300" height="1.200"/><rect x="133.650" y="472.8" width="1.300" height="1.200"/><rect x="135.500" y="472.8" width="1.300" height="1.200"/></g><rect x="155.500" y="466.59999999999997" width="9" height="9.400" fill="#1f9a55"/><rect x="160" y="466.59999999999997" width="4.500" height="9.400" fill="#37b56e"/><rect x="153.600" y="468.2" width="6.200" height="6.200" fill="#127a3f"/><path d="M155.200 469.59999999999997l3 3.400M158.200 469.59999999999997l-3 3.400" stroke="#fff" stroke-width=".8"/><rect x="181.500" y="466.59999999999997" width="9" height="6.600" fill="#2a8de0"/><rect x="185" y="470.59999999999997" width="6.400" height="5" fill="#e0a243"/><path d="M185 470.59999999999997l3.200 2.400 3.200-2.400" stroke="#f4d7a0" stroke-width=".6" fill="none"/><rect x="179.200" y="468.2" width="5.800" height="5.800" fill="#1468b8"/><circle cx="182.100" cy="471.09999999999997" r="1.500" fill="none" stroke="#fff" stroke-width=".8"/><rect x="203" y="466.2" width="10.800" height="10.400" fill="#eef0f2"/><path d="M211.300 468.4a3.900 3.900 0 1 0 .2 5.300l-1.500-1.300a2 2 0 1 1-.1-2.800z" fill="#1b7fc4"/><rect x="206" y="474.8" width="5" height="1" fill="#2a3340"/><path d="M226.800 467.4h4l1 1.200h6v2h-11z" fill="#e8b530"/><rect x="226.800" y="469.59999999999997" width="11" height="6" fill="#f4d060"/><rect x="228.600" y="472.59999999999997" width="7.400" height="3" fill="#4a90d6"/><path d="M251.400 471.8l7-3.600 3.600 1.800-7 4.200z" fill="#6f7378"/><path d="M251.400 471.8l3.600 2.400v1l-3.600-2.400z" fill="#4d5054"/><rect x="276.600" y="466.2" width="10.400" height="10" fill="#2a0a3a" stroke="#a25ad0" stroke-width=".9"/><rect x="301.200" y="466.2" width="10" height="10" fill="#f2cf2a"/><path d="M307 476.2l4.200-4.200v4.200z" fill="#3a3320"/><path d="M307 472.0h4.200" stroke="#c9a81c" stroke-width=".6"/><rect x="324.600" y="466.2" width="10.800" height="10.400" fill="#5d8f8c"/><circle cx="330" cy="471.4" r="2.600" fill="none" stroke="#eef0f2" stroke-width="1.300"/><circle cx="330" cy="471.4" r="3.800" fill="none" stroke="#eef0f2" stroke-width=".5" stroke-dasharray="1 1"/><rect x="349.800" y="466.2" width="10.400" height="10.400" rx="1" fill="#c8201c"/><path d="M352 474.2c2-2 3-5 3-6.400c0-1.200-1.200-1-1 .2c.4 2.400 2.400 4.400 4.600 4.600c1 0 .8-1-.4-.9c-2 .2-4.600 1.200-6.200 2.500z" fill="none" stroke="#fff" stroke-width=".7"/><rect x="376" y="466.2" width="7" height="9" fill="#f0c840"/><path d="M380 471.8h6v4h-8z" fill="#3f8fdc"/><rect x="377" y="467.59999999999997" width="3" height="1" fill="#fff"/><circle cx="404" cy="471.2" r="5" fill="#e3483a"/><path d="M404 471.2L399.67 468.7A5 5 0 0 0 401.5 475.53Z" fill="#3ba55a"/><path d="M404 471.2L401.5 475.53A5 5 0 0 0 409 471.2Z" fill="#f3c130"/><path d="M404 471.2L409 471.2A5 5 0 0 0 399.67 468.7Z" fill="#e3483a"/><circle cx="404" cy="471.2" r="2.300" fill="#fff"/><circle cx="404" cy="471.2" r="1.700" fill="#4a8de8"/><circle cx="428.300" cy="471.2" r="5" fill="#f08a24"/><path d="M423.600 469.59999999999997a5 5 0 0 0 9.600 2.600a3.600 3.600 0 0 1-6-3.600z" fill="#e8423c"/><circle cx="428.800" cy="471.4" r="2.300" fill="#7a3bd0"/><path d="M424 468.2c1.400-1.800 4-2.400 6-1.400c-1.600 0-2.600.8-2.800 2z" fill="#f7c63a"/><circle cx="453.3" cy="471.2" r="5" fill="#e3483a"/><path d="M453.3 471.2L448.97 468.7A5 5 0 0 0 450.8 475.53Z" fill="#3ba55a"/><path d="M453.3 471.2L450.8 475.53A5 5 0 0 0 458.3 471.2Z" fill="#f3c130"/><path d="M453.3 471.2L458.3 471.2A5 5 0 0 0 448.97 468.7Z" fill="#e3483a"/><circle cx="453.3" cy="471.2" r="2.300" fill="#fff"/><circle cx="453.3" cy="471.2" r="1.700" fill="#4a8de8"/><rect x="466" y="461.600" width="23.400" height="18.400" fill="#4b4447"/><rect x="471.600" y="465.8" width="11.400" height="11" fill="#f2f3f4"/><path d="M474 475.0l3.300-7.800 3.300 7.800h-1.800l-.6-1.600h-1.900l-.600 1.600z" fill="#c4262a"/><rect x="473.200" y="475.59999999999997" width="8.200" height=".9" fill="#c4262a"/><circle cx="501.700" cy="471.2" r="5" fill="#d8442c"/><circle cx="500" cy="470.8" r="2" fill="#f4b8a0"/><path d="M497.600 473.2h8" stroke="#fff" stroke-width=".9"/><rect x="125" y="478.500" width="19" height="1.500" fill="#9dc0ec"/><rect x="173" y="478.500" width="20" height="1.500" fill="#9dc0ec"/><rect x="222.5" y="478.500" width="20.0" height="1.500" fill="#9dc0ec"/><rect x="347" y="478.500" width="18" height="1.500" fill="#9dc0ec"/><rect x="393" y="478.500" width="20" height="1.500" fill="#9dc0ec"/><rect x="420" y="478.500" width="18" height="1.500" fill="#9dc0ec"/><rect x="445" y="478.500" width="20" height="1.500" fill="#9dc0ec"/><rect x="466" y="478.500" width="23.399999999999977" height="1.500" fill="#9dc0ec"/><rect x="493" y="478.500" width="19" height="1.500" fill="#9dc0ec"/><g transform="translate(917.100,471.8) rotate(-45)" fill="none" stroke="#dfe3e8" stroke-width=".9"><rect x="-4.600" y="-1.300" width="4.600" height="2.600" rx="1.300"/><rect x="0" y="-1.300" width="4.600" height="2.600" rx="1.300"/></g></svg>
<div class="t" style="left:279.00px;top:467.60px;font-size:5.32px;line-height:7.6px;color:#c98af0;transform-origin:0 50%;transform:scaleX(1.103);letter-spacing:0.000px;font-weight:bold;">Pr</div>
<div class="t" style="left:936.10px;top:463.20px;font-size:5.13px;line-height:7.4px;color:#f2f3f4;transform-origin:0 50%;transform:scaleX(0.966);letter-spacing:0.000px;">13:14</div>
<div class="t" style="left:928.10px;top:470.80px;font-size:5.13px;line-height:7.4px;color:#f2f3f4;transform-origin:0 50%;transform:scaleX(1.106);letter-spacing:0.000px;">04/03/2021</div>
<svg class="a" style="left:0px;top:0px" width="960" height="480" viewBox="0 0 960 480"><path d="M949.4 80.5h6.400l-4.400 3.400v3z" fill="#e6e9ec"/><path d="M949.4 91h6.400l-4.400 3.400v3z" fill="#e6e9ec"/><path d="M951.4 101.8v5.600l1.300-1.100.9 2 .9-.4-.9-2h1.800z" fill="#7f8a97"/><path d="M951.0 116.600l3.200-5.200" stroke="#7f8a97" stroke-width=".9"/><rect x="949.6" y="121.39999999999999" width="5" height="6.800" fill="#e6e9ec"/><rect x="952.2" y="124.39999999999999" width="3.600" height="3.600" fill="#9fb6cf"/><path d="M950.4 122.8h3.400M950.4 124.2h2" stroke="#5d6875" stroke-width=".5"/><circle cx="952.6" cy="134.8" r="3.300" fill="#3f97e2"/><path d="M949.8000000000001 134.20000000000002c2 .8 3.600 .8 5.600 0M952.2 131.60000000000002c-1.400 2-1.400 4.400 0 6.400" stroke="#c6e3f8" stroke-width=".6" fill="none"/><circle cx="952.6" cy="144" r="3.300" fill="#3f97e2"/><path d="M949.8000000000001 143.4c2 .8 3.600 .8 5.600 0M952.2 140.8c-1.400 2-1.400 4.400 0 6.400" stroke="#c6e3f8" stroke-width=".6" fill="none"/><path d="M950.2 152.8L954.6 157.0" stroke="#7f8a97" stroke-width=".9"/><circle cx="951.0" cy="153.4" r=".9" fill="#7f8a97"/><circle cx="954.8000000000001" cy="157.20000000000002" r=".7" fill="#7f8a97"/><path d="M950.2 161.5L954.6 165.7" stroke="#7f8a97" stroke-width=".9"/><circle cx="951.0" cy="162.1" r=".9" fill="#7f8a97"/><circle cx="954.8000000000001" cy="165.9" r=".7" fill="#7f8a97"/><path d="M950.2 172L954.6 176.2" stroke="#7f8a97" stroke-width=".9"/><circle cx="951.0" cy="172.6" r=".9" fill="#7f8a97"/><circle cx="954.8000000000001" cy="176.4" r=".7" fill="#7f8a97"/><path d="M950.2 181.5L954.6 185.7" stroke="#7f8a97" stroke-width=".9"/><circle cx="951.0" cy="182.1" r=".9" fill="#7f8a97"/><circle cx="954.8000000000001" cy="185.9" r=".7" fill="#7f8a97"/><path d="M950.0 191h3.400l2 2v2.400h-5.400z" fill="none" stroke="#7f8a97" stroke-width=".7"/><path d="M949.8000000000001 201.400h4.600v4.600M949.8000000000001 203.600h2.600" fill="none" stroke="#7f8a97" stroke-width=".8"/><path d="M947.600 210.600h10" stroke="#c3cad2" stroke-width=".8"/><path d="M949.2 217.4L952.6 213.60000000000002L956.0 217.4L954.6 217.4V219.60000000000002H953.2V217.60000000000002H952.0V219.60000000000002H950.6V217.4Z" fill="#e6e9ec"/><path d="M949.2 222.800h6.800" stroke="#b4bcc6" stroke-width=".8" stroke-dasharray="1 .6"/><path d="M949.6 227.600h4l2 2M949.6 230h6" stroke="#7f8a97" stroke-width=".7" fill="none"/><ellipse cx="952.2" cy="236.70000000000002" rx="2.600" ry="1.800" fill="#b4bcc6"/><path d="M949.6 239.9h6.400" stroke="#b4bcc6" stroke-width=".7"/><ellipse cx="952.2" cy="246.70000000000002" rx="2.600" ry="1.800" fill="#b4bcc6"/><path d="M949.6 249.9h6.400" stroke="#b4bcc6" stroke-width=".7"/><path d="M947.600 254h10" stroke="#c3cad2" stroke-width=".8"/><path d="M949.8000000000001 264.1V260.5L952.6 258.5L955.4 260.5V264.1Z" fill="none" stroke="#7f8a97" stroke-width=".7"/><path d="M949.8000000000001 273.1V269.5L952.6 267.5L955.4 269.5V273.1Z" fill="none" stroke="#7f8a97" stroke-width=".7"/><path d="M949.8000000000001 283.1V279.5L952.6 277.5L955.4 279.5V283.1Z" fill="none" stroke="#7f8a97" stroke-width=".7"/><path d="M949.6 288.600l2.600 1.600 3.400-2.400M949.6 292h6" stroke="#7f8a97" stroke-width=".7" fill="none"/><circle cx="952.2" cy="299.800" r="3" fill="none" stroke="#e6e9ec" stroke-width="1"/><circle cx="954.0" cy="301.200" r="1.700" fill="#e8c24a"/><circle cx="952.6" cy="308.400" r="1.800" fill="#e8d48a"/><path d="M949.6 311.800h6.400" stroke="#e6e9ec" stroke-width=".9"/><circle cx="950.8000000000001" cy="310" r="1.100" fill="#e6e9ec"/><path d="M949.6 324.600a5.600 5.600 0 0 1 5.600-5.600" stroke="#e6e9ec" stroke-width="1" fill="none"/><rect x="952.6" y="320.600" width="3.200" height="3.600" fill="#e6e9ec"/><path d="M949.2 334.20000000000005L952.6 330.40000000000003L956.0 334.20000000000005L954.6 334.20000000000005V336.40000000000003H953.2V334.40000000000003H952.0V336.40000000000003H950.6V334.20000000000005Z" fill="#e6e9ec"/><rect x="949.6" y="340.6" width="5" height="6.800" fill="#e6e9ec"/><rect x="952.2" y="343.6" width="3.600" height="3.600" fill="#9fb6cf"/><path d="M950.4 342h3.400M950.4 343.4h2" stroke="#5d6875" stroke-width=".5"/><path d="M949.2 354.20000000000005L952.6 350.40000000000003L956.0 354.20000000000005L954.6 354.20000000000005V356.40000000000003H953.2V354.40000000000003H952.0V356.40000000000003H950.6V354.20000000000005Z" fill="#e6e9ec"/><path d="M953.2 356.400l3-3" stroke="#8fc0ea" stroke-width="1"/></svg>
</div></body></html>
